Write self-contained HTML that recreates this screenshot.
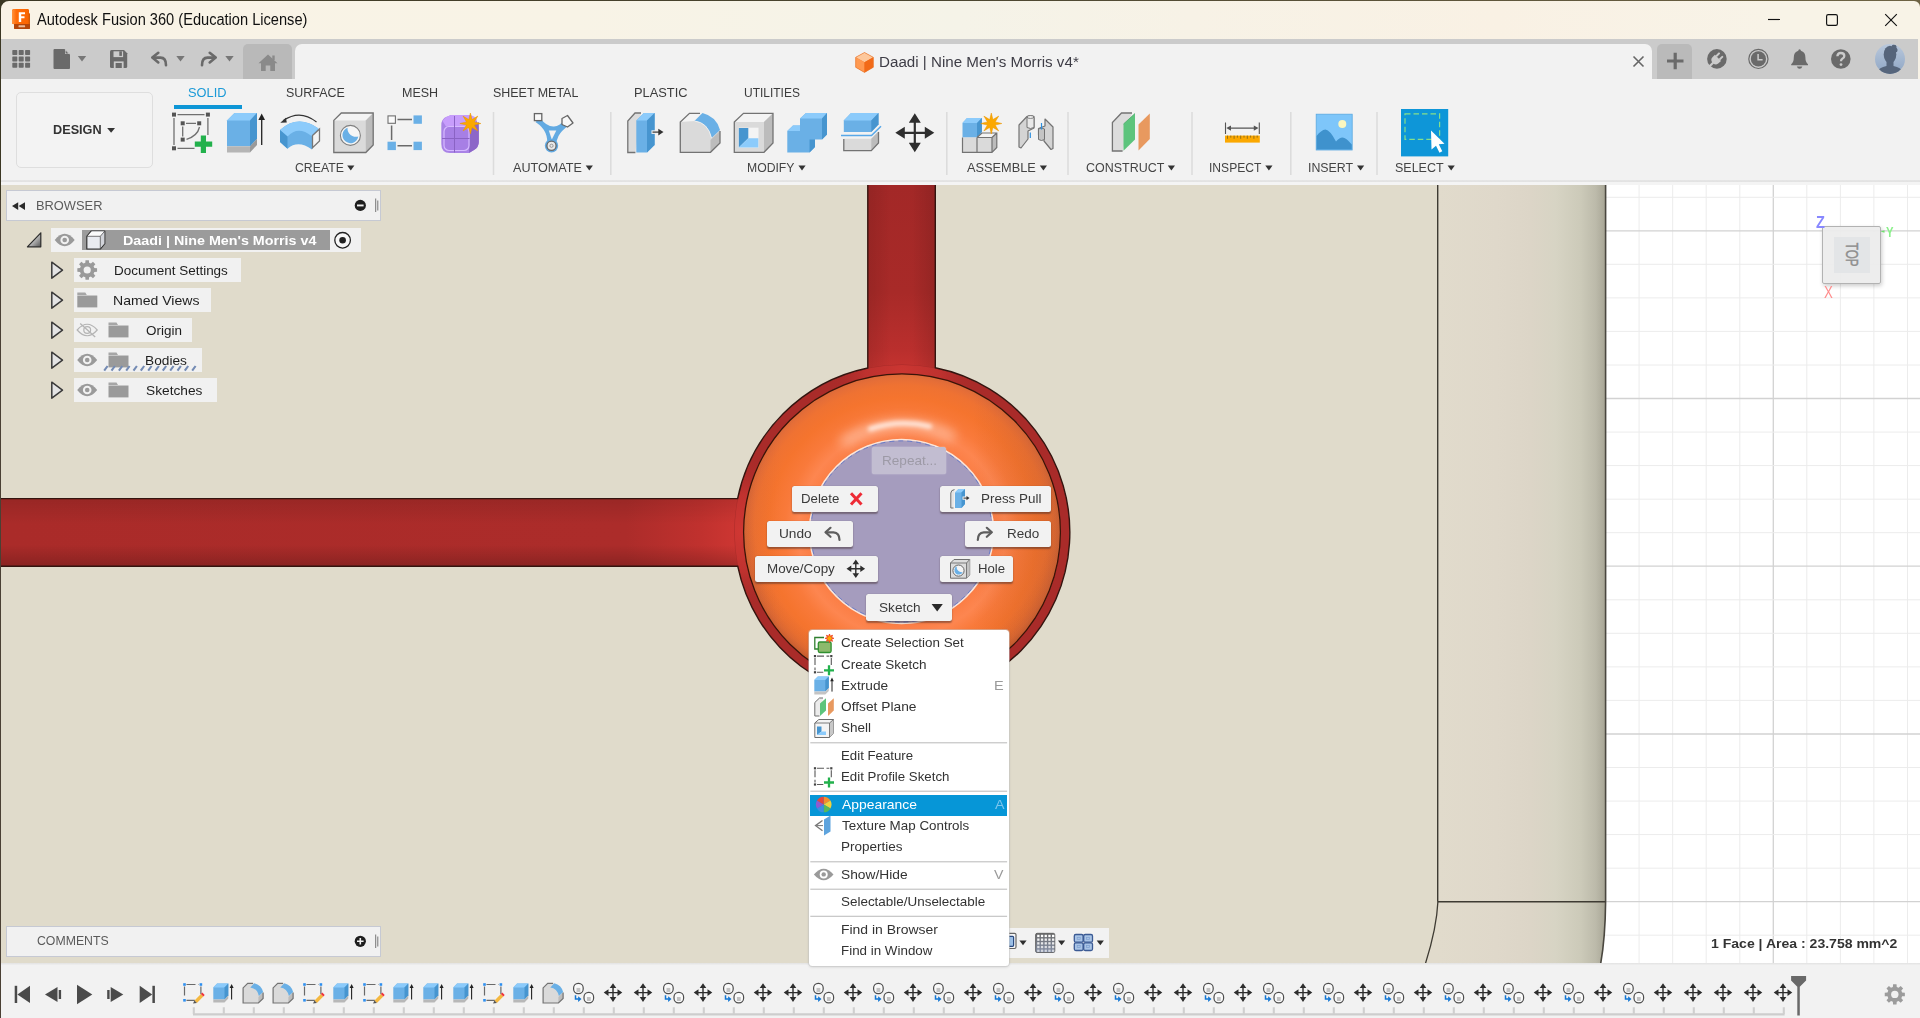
<!DOCTYPE html>
<html><head><meta charset="utf-8"><title>Autodesk Fusion 360</title>
<style>
*{box-sizing:border-box;margin:0;padding:0}
html,body{width:1920px;height:1018px;overflow:hidden}
body{font-family:"Liberation Sans",sans-serif;background:#f8f3e7;position:relative;color:#3c3c3c}
.a{position:absolute}
.tx{position:absolute;white-space:pre;transform-origin:0 0;display:block}
svg{position:absolute;overflow:visible}
#title{position:absolute;left:0;top:0;width:1920px;height:39px;background:linear-gradient(90deg,#f9f3e6 0,#f8f3e6 30%,#f5f3e8 50%,#f7f2e6 62%,#f9f1e4 78%,#f8f3e7 92%,#f8f3e7 100%)}
#qat{position:absolute;left:0;top:39px;width:1918px;height:40px;background:#cbcbcb}
#tabbar{position:absolute;left:295px;top:44px;width:1357px;height:35px;background:#f2f2f2;border-radius:7px 7px 0 0}
#home{position:absolute;left:243px;top:44px;width:49px;height:35px;background:#b9b9b9;border-radius:5px 5px 0 0}
#plus{position:absolute;left:1657px;top:44px;width:35px;height:35px;background:#bababa;border-radius:5px 5px 0 0}
#tool{position:absolute;left:0;top:79px;width:1920px;height:102px;background:#f2f2f2}
#toolsep{position:absolute;left:0;top:180px;width:1920px;height:5px;background:linear-gradient(#e6e6e6 0,#e2e2e2 1.8px,#f4f4f4 2.2px,#f4f4f4 100%)}
#canvas{position:absolute;left:0;top:185px;width:1920px;height:778px;background:#e0dbcb;overflow:hidden}
#tl{position:absolute;left:0;top:963px;width:1920px;height:55px;background:linear-gradient(#e2e2e2 0,#ececec 1.5px,#f2f2f2 2.5px,#f2f2f2 100%)}
</style></head><body>
<div id="title"></div><div id="qat"></div><div id="home"></div><div id="tabbar"></div><div id="plus"></div><div id="tool"></div><div id="toolsep"></div>
<div id="canvas"><svg style="left:0;top:0" width="1920" height="779" viewBox="0 185 1920 779"><defs>
<linearGradient id="gside" x1="1438" x2="1606" y1="0" y2="0" gradientUnits="userSpaceOnUse">
<stop offset="0" stop-color="#e1dbcc"/><stop offset=".35" stop-color="#dfd8ca"/><stop offset=".55" stop-color="#dcd5c7"/><stop offset=".7" stop-color="#d7d4c4"/><stop offset=".85" stop-color="#cccab9"/><stop offset=".94" stop-color="#bcbaaa"/><stop offset="1" stop-color="#a6a494"/>
</linearGradient>
<linearGradient id="gv" x1="0" x2="0" y1="185" y2="380" gradientUnits="userSpaceOnUse">
<stop offset="0" stop-color="#a32827"/><stop offset=".55" stop-color="#a82a28"/><stop offset=".85" stop-color="#ba2f2d"/><stop offset="1" stop-color="#ca3531"/>
</linearGradient>
<linearGradient id="gve" x1="867" x2="936" y1="0" y2="0" gradientUnits="userSpaceOnUse">
<stop offset="0" stop-color="#000" stop-opacity=".10"/><stop offset=".35" stop-color="#000" stop-opacity="0"/><stop offset=".65" stop-color="#000" stop-opacity="0"/><stop offset="1" stop-color="#000" stop-opacity=".12"/>
</linearGradient>
<linearGradient id="gh" x1="0" x2="745" y1="0" y2="0" gradientUnits="userSpaceOnUse">
<stop offset="0" stop-color="#aa2b29"/><stop offset=".84" stop-color="#ac2c2a"/><stop offset=".94" stop-color="#c0312e"/><stop offset="1" stop-color="#d03733"/>
</linearGradient>
<linearGradient id="ghe" x1="0" x2="0" y1="498" y2="567" gradientUnits="userSpaceOnUse">
<stop offset="0" stop-color="#000" stop-opacity=".11"/><stop offset=".38" stop-color="#000" stop-opacity="0"/><stop offset=".68" stop-color="#000" stop-opacity="0"/><stop offset="1" stop-color="#000" stop-opacity=".2"/>
</linearGradient>
<radialGradient id="gor" cx="902" cy="532.3" r="158.400" gradientUnits="userSpaceOnUse">
<stop offset="0" stop-color="#fa7c42"/><stop offset=".58" stop-color="#fb7e45"/><stop offset=".655" stop-color="#fd8650"/><stop offset=".74" stop-color="#f97a3b"/><stop offset=".85" stop-color="#f5742e"/><stop offset=".93" stop-color="#ef7232"/><stop offset=".97" stop-color="#e66e37"/><stop offset="1" stop-color="#db6a39"/>
</radialGradient>
<linearGradient id="gosh" x1="744" x2="1061" y1="0" y2="0" gradientUnits="userSpaceOnUse"><stop offset="0" stop-color="#7a3a20" stop-opacity=".06"/><stop offset=".12" stop-color="#7a3a20" stop-opacity="0"/><stop offset=".72" stop-color="#7a3a20" stop-opacity="0"/><stop offset="1" stop-color="#7a3a20" stop-opacity=".16"/></linearGradient>
<radialGradient id="ghl" cx="902" cy="470" r="75" gradientUnits="userSpaceOnUse" gradientTransform="translate(902 470) scale(1 .55) translate(-902 -470)">
<stop offset="0" stop-color="#fff" stop-opacity=".75"/><stop offset="1" stop-color="#fff" stop-opacity="0"/>
</radialGradient>
<clipPath id="cring"><path d="M902 374A158.500 158.500 0 1 1 901.9 374ZM901.500 440A91.500 91.500 0 1 0 901.6 440Z" clip-rule="evenodd"/></clipPath>
</defs><rect x="1592" y="185" width="328" height="779" fill="#fff"/><g fill="none"><path d="M1639.1 185V964" stroke="#ececec" stroke-width="1"/><path d="M1672.7 185V964" stroke="#ececec" stroke-width="1"/><path d="M1706.2 185V964" stroke="#ececec" stroke-width="1"/><path d="M1739.8 185V964" stroke="#ececec" stroke-width="1"/><path d="M1773.3 185V964" stroke="#d2d2d2" stroke-width="1.3"/><path d="M1806.8 185V964" stroke="#ececec" stroke-width="1"/><path d="M1840.4 185V964" stroke="#ececec" stroke-width="1"/><path d="M1873.9 185V964" stroke="#ececec" stroke-width="1"/><path d="M1907.5 185V964" stroke="#ececec" stroke-width="1"/><path d="M1598 197.3H1920" stroke="#ececec" stroke-width="1"/><path d="M1598 230.8H1920" stroke="#d2d2d2" stroke-width="1.3"/><path d="M1598 264.3H1920" stroke="#ececec" stroke-width="1"/><path d="M1598 297.9H1920" stroke="#ececec" stroke-width="1"/><path d="M1598 331.4H1920" stroke="#ececec" stroke-width="1"/><path d="M1598 365.0H1920" stroke="#ececec" stroke-width="1"/><path d="M1598 398.5H1920" stroke="#d2d2d2" stroke-width="1.3"/><path d="M1598 432.1H1920" stroke="#ececec" stroke-width="1"/><path d="M1598 465.6H1920" stroke="#ececec" stroke-width="1"/><path d="M1598 499.2H1920" stroke="#ececec" stroke-width="1"/><path d="M1598 532.7H1920" stroke="#ececec" stroke-width="1"/><path d="M1598 566.2H1920" stroke="#d2d2d2" stroke-width="1.3"/><path d="M1598 599.8H1920" stroke="#ececec" stroke-width="1"/><path d="M1598 633.3H1920" stroke="#ececec" stroke-width="1"/><path d="M1598 666.9H1920" stroke="#ececec" stroke-width="1"/><path d="M1598 700.4H1920" stroke="#ececec" stroke-width="1"/><path d="M1598 734.0H1920" stroke="#d2d2d2" stroke-width="1.3"/><path d="M1598 767.5H1920" stroke="#ececec" stroke-width="1"/><path d="M1598 801.1H1920" stroke="#ececec" stroke-width="1"/><path d="M1598 834.6H1920" stroke="#ececec" stroke-width="1"/><path d="M1598 868.2H1920" stroke="#ececec" stroke-width="1"/><path d="M1598 901.7H1920" stroke="#d2d2d2" stroke-width="1.3"/><path d="M1598 935.2H1920" stroke="#ececec" stroke-width="1"/></g><path d="M1438 185H1605.8V901.7C1605.5 925 1604 945 1600.6 964H1425.5C1431 946 1436.8 925 1438 901.7Z" fill="url(#gside)"/><path d="M1437.7 185V901.7" stroke="#3e3b33" stroke-width="1.4" fill="none"/><path d="M1605.6 185V901.7C1605.4 925 1604 945 1600.6 964" stroke="#4a473f" stroke-width="1.6" fill="none"/><path d="M1437.7 901.7H1605.6" stroke="#3e3b33" stroke-width="1.4" fill="none"/><path d="M1437.9 901.7C1436.8 925 1431 946 1425.3 964" stroke="#3e3b33" stroke-width="1.3" fill="none"/><rect x="867.800" y="184" width="67.500" height="200" fill="url(#gv)"/><rect x="867.800" y="184" width="67.500" height="200" fill="url(#gve)"/><rect x="-1" y="498.6" width="750" height="67.6" fill="url(#gh)"/><rect x="-1" y="498.6" width="750" height="67.6" fill="url(#ghe)"/><circle cx="902" cy="532.3" r="167.8" fill="#a92b29"/><defs><clipPath id="cout"><circle cx="902" cy="532.3" r="167.300"/></clipPath><radialGradient id="gj1" cx="903" cy="372" r="75" gradientUnits="userSpaceOnUse"><stop offset="0" stop-color="#cc3632"/><stop offset=".5" stop-color="#c33330" stop-opacity=".8"/><stop offset="1" stop-color="#a92b29" stop-opacity="0"/></radialGradient><radialGradient id="gj2" cx="742" cy="532" r="75" gradientUnits="userSpaceOnUse"><stop offset="0" stop-color="#d03733"/><stop offset=".5" stop-color="#c63431" stop-opacity=".8"/><stop offset="1" stop-color="#a92b29" stop-opacity="0"/></radialGradient></defs><g clip-path="url(#cout)"><rect x="820" y="360" width="170" height="90" fill="url(#gj1)"/><rect x="730" y="450" width="90" height="170" fill="url(#gj2)"/></g><path d="M935.300 184V367.8A167.8 167.8 0 1 1 737.7 566.2H-2M-2 498.6H737.6A167.8 167.8 0 0 1 867.800 368.0V184" fill="none" stroke="#33140f" stroke-width="1.400"/><circle cx="902" cy="532.3" r="158.400" fill="url(#gor)" stroke="#3a1408" stroke-width="1.3"/><circle cx="902" cy="532.300" r="157.700" fill="url(#gosh)"/><defs><radialGradient id="grim" cx="902" cy="516" r="176" gradientUnits="userSpaceOnUse"><stop offset="0" stop-color="#7a3010" stop-opacity="0"/><stop offset=".84" stop-color="#7a3010" stop-opacity="0"/><stop offset=".93" stop-color="#7a3010" stop-opacity=".1"/><stop offset="1" stop-color="#7a3010" stop-opacity=".34"/></radialGradient></defs><circle cx="902" cy="532.300" r="157.700" fill="url(#grim)"/><filter id="bl" filterUnits="userSpaceOnUse" x="790" y="380" width="230" height="100"><feGaussianBlur stdDeviation="5.500"/></filter><filter id="bl2" filterUnits="userSpaceOnUse" x="790" y="380" width="230" height="100"><feGaussianBlur stdDeviation="2.200"/></filter><path d="M846 441A107 107 0 0 1 950 436" fill="none" stroke="#ffb999" stroke-width="11" stroke-linecap="round" filter="url(#bl)" opacity=".85"/><path d="M870 429A107 107 0 0 1 930 426.500" fill="none" stroke="#fff0e8" stroke-width="4.500" stroke-linecap="round" filter="url(#bl2)" opacity="1"/><circle cx="901.5" cy="531.5" r="92" fill="#a59cbe" stroke="#fbe6da" stroke-width="1.500"/><circle cx="901.5" cy="531.5" r="90.600" fill="none" stroke="#5b74c9" stroke-width="1" stroke-dasharray="5 4" opacity=".8"/></svg></div>
<div id="tl"></div>
<span class="tx" style="left:37.00px;top:11.76px;font-size:16px;line-height:16px;color:#101010;transform:scaleX(0.9129);">Autodesk Fusion 360 (Education License)</span>
<svg style="left:12px;top:9px" width="19" height="20" viewBox="0 0 19 20">
<defs><linearGradient id="fi1" x1="0" x2="1" y1="0" y2="0"><stop offset="0" stop-color="#ff9540"/><stop offset=".25" stop-color="#ff6d0a"/><stop offset="1" stop-color="#f96400"/></linearGradient></defs>
<path d="M2.2 0H15.5Q17 0 17 1.5V4.2L18 5V19Q18 20 17 20H3Q2 20 2 19V15.3L0 14.8V2Q0 0 2.2 0Z" fill="#d95800"/>
<path d="M2.2 0H15.2Q16.8 0 16.8 1.6V15H0V2Q0 0 2.2 0Z" fill="url(#fi1)"/>
<path d="M2 15H18V19Q18 20 17 20H3Q2 20 2 19Z" fill="#b4460a"/>
<path d="M16.8 4L18 5V15H16.8Z" fill="#cf5a0a"/>
<path d="M6.800 3.200H13V5.300H9.200V7.300H12.500V9.300H9.200V13H6.800Z" fill="#fff"/>
<rect x="6.5" y="16.3" width="6.6" height="2" rx=".6" fill="#f0c8a8" opacity=".9"/>
</svg>
<svg style="left:0;top:0" width="1920" height="39" viewBox="0 0 1920 39" fill="none" stroke="#111" stroke-width="1.15">
<path d="M1768 19.5H1780"/>
<rect x="1826.6" y="14.6" width="10.8" height="10.8" rx="1.6"/>
<path d="M1885.2 14.2L1896.8 25.8M1896.8 14.2L1885.2 25.8"/>
</svg>
<svg style="left:0;top:0" width="1920" height="80" viewBox="0 0 1920 80"><g fill="#6a6a6a"><rect x="12.3" y="50.0" width="5" height="5" rx=".7"/><rect x="12.3" y="56.4" width="5" height="5" rx=".7"/><rect x="12.3" y="62.8" width="5" height="5" rx=".7"/><rect x="18.7" y="50.0" width="5" height="5" rx=".7"/><rect x="18.7" y="56.4" width="5" height="5" rx=".7"/><rect x="18.7" y="62.8" width="5" height="5" rx=".7"/><rect x="25.1" y="50.0" width="5" height="5" rx=".7"/><rect x="25.1" y="56.4" width="5" height="5" rx=".7"/><rect x="25.1" y="62.8" width="5" height="5" rx=".7"/><path d="M54.5 49H64.5L70 54.5V68Q70 69 69 69H54.5Q53.5 69 53.5 68V50Q53.5 49 54.5 49Z"/><path d="M65 49.3L69.7 54H65Z" fill="#cbcbcb"/><path d="M65.6 50.6L68.4 53.4H65.6Z" fill="#6a6a6a"/><path d="M77.8 56H86.2L82 61.4Z" fill="#777"/><path d="M111.5 50H124L127.2 53.2V66.5Q127.2 68 125.7 68H111.5Q110 68 110 66.500V51.5Q110 50 111.5 50Z"/><rect x="113.5" y="51.3" width="9.6" height="5.8" fill="#cbcbcb"/><rect x="119.3" y="51.3" width="2.6" height="4.6" fill="#6a6a6a"/><rect x="113.8" y="61.4" width="9.800" height="6.6" fill="#cbcbcb"/><rect x="115.6" y="63" width="6.2" height="5" fill="#6a6a6a"/></g><g fill="none" stroke="#6a6a6a" stroke-width="2.600" stroke-linecap="round" stroke-linejoin="round"><path d="M158.3 52.8L152.3 57.6L158.3 62.400"/><path d="M153 57.6H160.500Q166 57.6 166 65.2"/><path d="M209.700 52.8L215.7 57.6L209.700 62.400"/><path d="M215 57.6H207.500Q202 57.6 202 65.2"/></g><path d="M176.300 56H184.700L180.500 61.4Z" fill="#777"/><path d="M225.300 56H233.700L229.500 61.4Z" fill="#777"/><g fill="#8a8a8a"><path d="M268 54.500L277.500 63.200H275V71H270.300V65.6H265.700V71H261V63.200H258.500Z"/><rect x="272.300" y="55.5" width="2.4" height="4.500"/></g><path d="M1633.500 56.5L1643.500 66.5M1643.500 56.5L1633.500 66.5" stroke="#666" stroke-width="1.6" fill="none"/><path d="M1667 61H1683.500M1675.200 52.8V69.200" stroke="#6a6a6a" stroke-width="3.200" fill="none"/><g transform="translate(1716.900 58.900)"><circle r="9.800" fill="#6a6a6a"/><g transform="rotate(45)" fill="#cbcbcb"><path d="M-4.300 -1.500H4.300V2Q4.300 5.500 0 5.800Q-4.300 5.500 -4.300 2Z"/><rect x="-3.300" y="-6.200" width="1.900" height="5" rx=".6"/><rect x="1.400" y="-6.200" width="1.900" height="5" rx=".6"/><rect x="-1.100" y="5" width="2.200" height="6"/></g></g><g transform="translate(1758.4 58.9)"><circle r="9.6" fill="none" stroke="#6a6a6a" stroke-width="1.200"/><circle r="7.600" fill="#6a6a6a"/><path d="M-.3 -5V.8H4.200" stroke="#cbcbcb" stroke-width="1.500" fill="none"/></g><g transform="translate(1799.6 59)" fill="#6a6a6a"><path d="M0 -9.800Q1.300 -9.800 1.300 -8.300Q5.800 -7 5.800 -1.500Q5.800 3.200 8.400 5.300V6.300H-8.400V5.300Q-5.800 3.200 -5.800 -1.500Q-5.800 -7 -1.300 -8.300Q-1.300 -9.800 0 -9.800Z"/><path d="M-2.800 7.600H2.800Q2 9.800 0 9.800Q-2 9.800 -2.800 7.600Z"/></g><g transform="translate(1840.8 59)"><circle r="9.800" fill="#6a6a6a"/><path d="M-3.400 -2.800Q-3.400 -6 0 -6Q3.500 -6 3.500 -3Q3.500 -1.200 1.500 -.2Q.2 .5 .2 2.300" fill="none" stroke="#cbcbcb" stroke-width="2.300"/><circle cx=".2" cy="5.600" r="1.400" fill="#cbcbcb"/></g><defs><linearGradient id="av" x1="0" x2="0" y1="0" y2="1"><stop offset="0" stop-color="#b9c8dc"/><stop offset="1" stop-color="#8fa6c4"/></linearGradient><clipPath id="avc"><circle cx="1890" cy="59" r="15"/></clipPath></defs>
<circle cx="1890" cy="59" r="15" fill="url(#av)"/>
<g clip-path="url(#avc)" fill="#56657b"><ellipse cx="1890" cy="54.500" rx="6.300" ry="8.800"/><path d="M1886.500 60H1893.500V66Q1901 67.500 1903 72V76H1877V72Q1879 67.500 1886.500 66Z"/><circle cx="1895" cy="50" r="2.500"/><circle cx="1894" cy="47" r="2.500"/></g></svg>
<svg style="left:855px;top:52px" width="19" height="21" viewBox="0 0 19 21">
<path d="M9.500 .5L18.300 5.300V15.300L9.500 20.400L.7 15.300V5.300Z" fill="#f4772a"/>
<path d="M9.500 .5L18.300 5.300L9.500 10.300L.7 5.300Z" fill="#fdc89c"/>
<path d="M.7 5.300L9.500 10.300V20.400L.7 15.300Z" fill="#ff9a52"/>
<path d="M9.500 10.300L18.300 5.300V15.300L9.500 20.400Z" fill="#f26a18"/>
<path d="M9.500 .5L18.300 5.300V15.300L9.500 20.400L.7 15.300V5.300Z" fill="none" stroke="#e8752c" stroke-width=".6"/>
</svg>
<span class="tx" style="left:879.29px;top:54.26px;font-size:15.4px;line-height:15.4px;color:#3e3d46;transform:scaleX(0.9851);">Daadi | Nine Men's Morris v4*</span>
<div class="a" style="left:16px;top:92px;width:137px;height:76px;border:1px solid #dedede;border-radius:5px;background:#f3f3f3"></div>
<span class="tx" style="left:52.97px;top:123.13px;font-size:13.2px;line-height:13.2px;color:#333;font-weight:bold;transform:scaleX(0.9623);">DESIGN</span>
<span class="tx" style="left:188.42px;top:86.13px;font-size:13.2px;line-height:13.2px;color:#1b9ad7;transform:scaleX(0.9711);">SOLID</span>
<span class="tx" style="left:286.04px;top:86.13px;font-size:13.2px;line-height:13.2px;color:#3c3c3c;transform:scaleX(0.9447);">SURFACE</span>
<span class="tx" style="left:401.50px;top:86.13px;font-size:13.2px;line-height:13.2px;color:#3c3c3c;transform:scaleX(0.9480);">MESH</span>
<span class="tx" style="left:493.44px;top:86.13px;font-size:13.2px;line-height:13.2px;color:#3c3c3c;transform:scaleX(0.9442);">SHEET METAL</span>
<span class="tx" style="left:633.97px;top:86.13px;font-size:13.2px;line-height:13.2px;color:#3c3c3c;transform:scaleX(0.9727);">PLASTIC</span>
<span class="tx" style="left:744.10px;top:86.13px;font-size:13.2px;line-height:13.2px;color:#3c3c3c;transform:scaleX(0.9084);">UTILITIES</span>
<div class="a" style="left:174px;top:105px;width:68px;height:3.5px;background:#0e96d6"></div>
<span class="tx" style="left:294.69px;top:161.21px;font-size:13.1px;line-height:13.1px;color:#444;transform:scaleX(0.9360);">CREATE</span>
<span class="tx" style="left:513.20px;top:161.21px;font-size:13.1px;line-height:13.1px;color:#444;transform:scaleX(0.9619);">AUTOMATE</span>
<span class="tx" style="left:747.02px;top:161.21px;font-size:13.1px;line-height:13.1px;color:#444;transform:scaleX(0.9318);">MODIFY</span>
<span class="tx" style="left:967.30px;top:161.21px;font-size:13.1px;line-height:13.1px;color:#444;transform:scaleX(0.9745);">ASSEMBLE</span>
<span class="tx" style="left:1085.58px;top:161.21px;font-size:13.1px;line-height:13.1px;color:#444;transform:scaleX(0.9522);">CONSTRUCT</span>
<span class="tx" style="left:1208.91px;top:161.21px;font-size:13.1px;line-height:13.1px;color:#444;transform:scaleX(0.9233);">INSPECT</span>
<span class="tx" style="left:1307.89px;top:161.21px;font-size:13.1px;line-height:13.1px;color:#444;transform:scaleX(0.9445);">INSERT</span>
<span class="tx" style="left:1395.04px;top:161.21px;font-size:13.1px;line-height:13.1px;color:#444;transform:scaleX(0.9539);">SELECT</span>
<svg style="left:0;top:0" width="1920" height="185" viewBox="0 0 1920 185"><path d="M347.2 165.6H354.4L350.8 170.4Z" fill="#333"/><path d="M585.7 165.6H592.9L589.3 170.4Z" fill="#333"/><path d="M798.4 165.6H805.6L802.0 170.4Z" fill="#333"/><path d="M1039.8 165.6H1047.0L1043.4 170.4Z" fill="#333"/><path d="M1167.8 165.6H1175.0L1171.4 170.4Z" fill="#333"/><path d="M1265.3 165.6H1272.5L1268.9 170.4Z" fill="#333"/><path d="M1357.0 165.6H1364.2L1360.6 170.4Z" fill="#333"/><path d="M1447.6 165.6H1454.8L1451.2 170.4Z" fill="#333"/><path d="M107.200 127.900H115L111.100 132.700Z" fill="#333"/><rect x="492.7" y="112" width="1.6" height="63" fill="#dcdcdc"/><rect x="610.0" y="112" width="1.6" height="63" fill="#dcdcdc"/><rect x="946.0" y="112" width="1.6" height="63" fill="#dcdcdc"/><rect x="1067.2" y="112" width="1.6" height="63" fill="#dcdcdc"/><rect x="1191.2" y="112" width="1.6" height="63" fill="#dcdcdc"/><rect x="1290.0" y="112" width="1.6" height="63" fill="#dcdcdc"/><rect x="1376.2" y="112" width="1.6" height="63" fill="#dcdcdc"/><g stroke="#707070" stroke-width="1.3" fill="none"><path d="M177.500 114.6H204.500M174 118V145M207.900 118V135M177.500 148.300H194.500"/><path d="M186 123.300H196M182.700 126.500V136.500M186.500 139.300Q197.500 136 199.500 127"/></g><rect x="172.0" y="112.6" width="4" height="4" fill="#555"/><rect x="205.9" y="112.6" width="4" height="4" fill="#555"/><rect x="172.0" y="146.3" width="4" height="4" fill="#555"/><rect x="180.7" y="121.3" width="4" height="4" fill="#555"/><rect x="197.2" y="121.3" width="4" height="4" fill="#555"/><rect x="180.7" y="137.6" width="4" height="4" fill="#555"/><path d="M200.800 135.400H206V141.600H212.200V146.800H206V153H200.800V146.800H194.800V141.600H200.800Z" fill="#22b14c"/><path d="M227 120.400L234.500 113H257V138.800L250 146.300H227Z" fill="#6ab0e6"/><path d="M227 120.400L234.500 113H257L250 120.400Z" fill="#8ccbfb"/><path d="M250 120.400L257 113V138.800L250 146.300Z" fill="#4795cf"/><path d="M227 146.300H250V152.500H227Z" fill="#b5b5b5"/><path d="M250 146.300L257 138.800V145L250 152.500Z" fill="#9a9a9a"/><path d="M261.700 145V119" stroke="#222" stroke-width="1.3"/><path d="M261.700 113.500L265 120H258.400Z" fill="#222"/><path d="M280 130Q298 114 318.500 128.500L312 149.500Q298 139.500 287.500 148.800L280 142Z" fill="#6ab0e6"/><path d="M280 130Q298 114 318.500 128.500L311.500 136Q298 125.500 287.500 136.500Z" fill="#8ccbfb"/><path d="M280 130L287.500 136.500V148.800L280 142Z" fill="#4795cf"/><path d="M312.500 135.500L319.500 129V141L312.500 147.800Z" fill="#f4f4f4" stroke="#777" stroke-width="1.3"/><path d="M283.500 120.500Q300 109 316.500 122" fill="none" stroke="#333" stroke-width="1.1"/><path d="M280.300 122.800L285.800 117.800L286.800 122.500Z" fill="#333"/><path d="M333.800 120.400L341.300 113H373.200V145L365.800 152.500H333.800Z" fill="#dadada"/><path d="M333.800 120.400L341.300 113H373.200L365.800 120.400Z" fill="#f4f4f4"/><path d="M365.800 120.400L373.200 113V145L365.800 152.500Z" fill="#bcbcbc"/><path d="M333.800 120.400L341.300 113H373.200V145L365.800 152.500H333.800Z" fill="none" stroke="#737373" stroke-width="1.300"/><circle cx="350.400" cy="135.400" r="10" fill="#f6f6f6" stroke="#808080" stroke-width="1.1"/><path d="M347.500 127.700A8 8 0 1 0 358.300 136.500A8.500 8.500 0 0 1 347.500 127.700Z" fill="#6ab0e6"/><path d="M397.500 119.600H412M391.600 125.500V140M397.500 145.800H412" stroke="#6a6a6a" stroke-width="1.5" fill="none"/><rect x="388" y="115.900" width="7.400" height="7.400" fill="#fafafa" stroke="#707070" stroke-width="1.100"/><rect x="413.5" y="115.4" width="8.400" height="8.400" fill="#6ab0e6"/><rect x="387.5" y="141.7" width="8.400" height="8.400" fill="#6ab0e6"/><rect x="413.5" y="141.7" width="8.400" height="8.400" fill="#6ab0e6"/><path d="M451 115H470Q478.800 118 478.800 132V142Q478.800 147 474 150L469 153H450Q441.300 153 441.300 144V125Q441.300 120 445 117.500Z" fill="#a983e6"/><path d="M451 115H470Q475 116 477 120L470 126.500H446L442.500 121Q444.500 117 451 115Z" fill="#c79dfc"/><path d="M470 128L478.800 122V142Q478.800 147 474 150L469 153Z" fill="#8c66c8"/><rect x="444" y="126.500" width="25" height="24" rx="5" fill="#a77fe5" stroke="#d6baff" stroke-width="1.2"/><path d="M454.500 116V152.500M442 138.500H469.500" stroke="#8a63c4" stroke-width="1"/><path d="M470.4 113.0L472.0 119.6L477.8 116.1L474.3 121.9L480.9 123.5L474.3 125.1L477.8 130.9L472.0 127.4L470.4 134.0L468.8 127.4L463.0 130.9L466.5 125.1L459.9 123.5L466.5 121.9L463.0 116.1L468.8 119.6Z" fill="#fba800" stroke="#e89400" stroke-width=".5"/><path d="M540 118Q547 127 554 126.500Q560 126 563.500 120.500L568.500 125.500Q561 131 558.500 136Q556 141 556 146H547Q548 139 545.500 133Q543 127 535.500 122Z" fill="#62aae2"/><path d="M548.800 130.500H556.300L551.800 139.500Z" fill="#f2f2f2"/><circle cx="551.500" cy="145.800" r="6.700" fill="#62aae2"/><circle cx="551.500" cy="145.800" r="4.600" fill="#e8e8e8" stroke="#666" stroke-width="1.300"/><circle cx="551.500" cy="145.800" r="1.600" fill="none" stroke="#888" stroke-width=".8"/><rect x="534.400" y="113.600" width="7.400" height="7.000" fill="#f8f8f8" stroke="#666" stroke-width="1.300"/><path d="M567.500 115.500L573 123L567.500 127L562 124.500V118.500Z" fill="#f8f8f8" stroke="#666" stroke-width="1.300" stroke-linejoin="round"/><path d="M635.400 152.500H627.800V121L635 113H641" fill="#dcdcdc" stroke="#737373" stroke-width="1.300"/><path d="M636.300 120.400L643.800 113H654.600V145L647 152.500H636.300Z" fill="#6ab0e6"/><path d="M636.300 120.400L643.800 113H654.600L647 120.400Z" fill="#8ccbfb"/><path d="M647 120.400L654.600 113V145L647 152.500Z" fill="#4795cf"/><rect x="651.500" y="130.300" width="6" height="3.600" fill="#f2f2f2"/><path d="M652.500 132.100H659" stroke="#333" stroke-width="1.200"/><path d="M663.500 132.100L658.300 128.800V135.400Z" fill="#333"/><path d="M680.300 122L689.500 113.300H700L720 131V143L710.500 152.300H680.300Z" fill="#dadada"/><path d="M680.300 122L689.500 113.300H702L694.500 121Z" fill="#f4f4f4"/><path d="M710.500 140L720 131V143L710.500 152.300Z" fill="#bcbcbc"/><path d="M700 113.300L689.500 113.300L680.300 122V152.300H710.500L720 143V131" fill="none" stroke="#737373" stroke-width="1.300"/><path d="M694.500 121Q708 122.500 711.500 138L720 130Q716.500 116.500 702.500 113Z" fill="#6ab0e6"/><path d="M694.500 121Q708 122.500 711.500 138" fill="none" stroke="#f0f0f0" stroke-width="1"/><path d="M734.300 122L743.500 113.300H773V143L764 152.300H734.300Z" fill="#dadada"/><path d="M734.300 122L743.500 113.300H773L764 122Z" fill="#f4f4f4"/><path d="M764 122L773 113.300V143L764 152.300Z" fill="#bcbcbc"/><path d="M734.300 122L743.500 113.300H773V143L764 152.300H734.300Z" fill="none" stroke="#737373" stroke-width="1.300"/><rect x="738.500" y="127.700" width="20" height="20" fill="#f4f4f4"/><path d="M738.800 128H748.300V138.300L738.800 147.500Z" fill="#4795cf"/><path d="M748.300 138.300H758.300V147.500H738.800Z" fill="#8ccbfb"/><path d="M787.300 131L793 125.500H800V118.500L806 113H827V134.500L822 139.500H815V147L809.500 152.500H787.300Z" fill="#6ab0e6"/><path d="M787.300 131L793 125.500H800V131ZM800 118.500L806 113H827L822 118.500Z" fill="#8ccbfb"/><path d="M822 118.500L827 113V134.500L822 139.500ZM809.500 139.500H815V147L809.500 152.500Z" fill="#4795cf"/><path d="M843.800 120.600L851 113H878.500V124.500L871.300 131.900H843.800Z" fill="#6ab0e6"/><path d="M843.800 120.600L851 113H878.500L871.300 120.600Z" fill="#8ccbfb"/><path d="M871.300 120.600L878.500 113V124.500L871.300 131.900Z" fill="#4795cf"/><path d="M843.800 138.800H871.300L878.500 131.500V143L871.300 150.600H843.800Z" fill="#dadada"/><path d="M871.300 138.800L878.500 131.500V143L871.300 150.600Z" fill="#bcbcbc"/><path d="M843.800 139V150.600H871.300L878.500 143V132" fill="none" stroke="#737373" stroke-width="1.300"/><path d="M841 135.600H871.500L881 126.300" fill="none" stroke="#58a8e8" stroke-width="1.500"/><g transform="translate(914.8 132.800)" fill="#2e2e2e"><path d="M-12 -1.100H12V1.100H-12Z M-1.100 -12H1.100V12H-1.100Z"/><path d="M0 -19.500L6 -10H-6ZM0 19.500L6 10H-6ZM-19.500 0L-10 -6V6ZM19.500 0L10 -6V6Z"/></g><path d="M962.500 123L967 118H981.900V132L977 137.500H962.500Z" fill="#6ab0e6"/><path d="M962.500 123L967 118H981.900L977 123Z" fill="#8ccbfb"/><path d="M977 123L981.900 118V132L977 137.500Z" fill="#4795cf"/><path d="M962.500 137.500H977L982 133H996.800V147.500L992 152.300H962.500Z" fill="#dadada"/><path d="M977 137.500L982 133H996.800L992 137.500Z" fill="#f4f4f4"/><path d="M992 137.500L996.800 133V147.500L992 152.300Z" fill="#bcbcbc"/><path d="M962.500 137.500V152.300H992L996.800 147.500V133H982L977 137.500M977 137.500V152.300M977 137.500H992V152.300M992 137.500L996.800 133" fill="none" stroke="#737373" stroke-width="1.200"/><path d="M991.3 113.0L992.9 119.6L998.7 116.1L995.2 121.9L1001.8 123.5L995.2 125.1L998.7 130.9L992.9 127.4L991.3 134.0L989.7 127.4L983.9 130.9L987.4 125.1L980.8 123.5L987.4 121.9L983.9 116.1L989.7 119.6Z" fill="#fba800" stroke="#e89400" stroke-width=".5"/><path d="M1019 125L1027 116.500Q1030.500 114.500 1034 116.500V128L1028 131V139L1021 148L1019 147Z" fill="#d4d4d4" stroke="#737373" stroke-width="1.200" stroke-linejoin="round"/><path d="M1027 117.500Q1030.500 115.500 1034 117.500V127.500Q1030.500 129.500 1027 127.500Z" fill="#e8e8e8" stroke="#737373" stroke-width="1"/><ellipse cx="1030.500" cy="117" rx="3.400" ry="1.400" fill="#f6f6f6" stroke="#737373" stroke-width=".9"/><path d="M1045 119L1053 127V148.500L1051 149.500L1044 141V137L1038.500 135V128.500L1045 126Z" fill="#d4d4d4" stroke="#737373" stroke-width="1.200" stroke-linejoin="round"/><path d="M1038.500 129Q1041.500 127 1044.500 129V139.500Q1041.500 141.500 1038.500 139.500Z" fill="#c4c4c4" stroke="#737373" stroke-width="1"/><path d="M1030.300 132.500V138M1041.500 123V129.500" stroke="#2d8fdf" stroke-width="1.200"/><path d="M1122.600 151H1112.400V122.500L1121.500 113H1132" fill="#dcdcdc" stroke="#737373" stroke-width="1.300"/><path d="M1123.500 124L1135 113.500V139.500L1123.500 150.800Z" fill="#5cc47c"/><path d="M1123.500 124L1135 113.500" stroke="#4aa868" stroke-width=".8"/><path d="M1138.500 124.500L1149.800 113.500V139L1138.500 150.500Z" fill="#e8995f"/><rect x="1225" y="135.600" width="34.800" height="7" fill="#fba800"/><path d="M1227.5 135.600V138.8M1230.8 135.600V137.6M1234.1 135.600V138.8M1237.4 135.600V137.6M1240.7 135.600V138.8M1244.0 135.600V137.6M1247.3 135.600V138.8M1250.6 135.600V137.6M1253.9 135.600V138.8M1257.2 135.600V137.6" stroke="#8a6a1a" stroke-width=".9"/><path d="M1225.500 122.600V134M1259.300 122.600V134M1228 128.100H1257" stroke="#555" stroke-width="1.100" fill="none"/><path d="M1226.300 128.100L1231 125.500V130.700ZM1258.500 128.100L1253.800 125.500V130.700Z" fill="#555"/><rect x="1316.200" y="114.200" width="36" height="35.800" fill="#7ec6fa" stroke="#5aa8e0" stroke-width=".8"/><path d="M1316.600 136Q1321 130 1325.500 129.500Q1330 130 1336 141.500Q1339.500 137.500 1342.500 137.500Q1346 137.500 1351.800 144.500V149.600H1316.600Z" fill="#3f92cd"/><circle cx="1342.300" cy="124" r="4" fill="#fbf7c0"/><rect x="1401" y="109" width="47.200" height="47.400" fill="#0e96d8"/><rect x="1405" y="113.800" width="34.600" height="25.600" fill="none" stroke="#86e08a" stroke-width="1.200" stroke-dasharray="5.500 3"/><path d="M1431 130.500L1444.500 143.800L1438.800 144.300L1442.300 151.300L1439.500 152.700L1436 145.800L1431.500 149.500Z" fill="#fff"/></svg>
<div class="a" style="left:6px;top:190px;width:375px;height:31px;background:#f1f1f1;border:1px solid #c6c9d3"></div>
<span class="tx" style="left:36.47px;top:199.04px;font-size:13.3px;line-height:13.3px;color:#5a5a5a;transform:scaleX(0.9667);">BROWSER</span>
<div class="a" style="left:51px;top:228px;width:310px;height:24.300px;background:#f1f1f1"></div>
<div class="a" style="left:82.300px;top:230.200px;width:247.300px;height:19.600px;background:#9b9b9b"></div>
<span class="tx" style="left:122.67px;top:233.87px;font-size:13.5px;line-height:13.5px;color:#fff;font-weight:bold;transform:scaleX(1.0596);">Daadi | Nine Men's Morris v4</span>
<div class="a" style="left:73.600px;top:257.6px;width:167.4px;height:24.400px;background:#f1f1f1"></div>
<span class="tx" style="left:113.52px;top:263.96px;font-size:13.4px;line-height:13.4px;color:#1e1e1e;transform:scaleX(1.0064);">Document Settings</span>
<div class="a" style="left:73.600px;top:287.6px;width:137.4px;height:24.400px;background:#f1f1f1"></div>
<span class="tx" style="left:113.47px;top:293.96px;font-size:13.4px;line-height:13.4px;color:#1e1e1e;transform:scaleX(1.0498);">Named Views</span>
<div class="a" style="left:73.600px;top:317.6px;width:118.4px;height:24.400px;background:#f1f1f1"></div>
<span class="tx" style="left:145.59px;top:323.96px;font-size:13.4px;line-height:13.4px;color:#1e1e1e;transform:scaleX(1.0048);">Origin</span>
<div class="a" style="left:73.600px;top:347.6px;width:128.4px;height:24.400px;background:#f1f1f1"></div>
<span class="tx" style="left:145.10px;top:353.96px;font-size:13.4px;line-height:13.4px;color:#1e1e1e;transform:scaleX(1.0237);">Bodies</span>
<div class="a" style="left:73.600px;top:377.6px;width:143.4px;height:24.400px;background:#f1f1f1"></div>
<span class="tx" style="left:145.58px;top:383.96px;font-size:13.4px;line-height:13.4px;color:#1e1e1e;transform:scaleX(1.0246);">Sketches</span>
<div class="a" style="left:6px;top:926px;width:375px;height:30.500px;background:#f1f1f1;border:1px solid #c6c9d3"></div>
<span class="tx" style="left:36.89px;top:934.63px;font-size:12.6px;line-height:12.6px;color:#5a5a5a;transform:scaleX(0.9756);">COMMENTS</span><svg style="left:0;top:0" width="400" height="964" viewBox="0 0 400 964"><path d="M12 206.100L18.200 202.200V210ZM18.700 206.100L25 202.200V210Z" fill="#2a2a2a"/><circle cx="360.300" cy="205.400" r="5.600" fill="#1e1e1e"/><rect x="357" y="204.500" width="6.600" height="1.900" fill="#f1f1f1"/><path d="M375.700 198.500V212M377.800 200.500V210.500" stroke="#777" stroke-width="1" fill="none"/><defs><linearGradient id="tg" x1="0" x2="1" y1="0" y2="1"><stop offset=".3" stop-color="#e8e8e8"/><stop offset="1" stop-color="#555"/></linearGradient></defs><path d="M40.800 232.800V246.800H27.400Z" fill="url(#tg)" stroke="#2c2c2c" stroke-width="1.200" stroke-linejoin="round"/><path d="M54.7 240.0Q64.7 227.5 74.7 240.0Q64.7 252.5 54.7 240.0Z" fill="#9a9a9a"/><circle cx="64.7" cy="240.0" r="4.300" fill="#f1f1f1"/><circle cx="64.7" cy="240.0" r="2.300" fill="#9a9a9a"/><path d="M86.800 236.300L91.300 231H104.800V243.700L100.300 249H86.800Z" fill="#e9ebf0" stroke="#333" stroke-width="1.200" stroke-linejoin="round"/><path d="M87.400 236.300L91.600 231.600H104.200L100.200 236.300Z" fill="#fbfbfb"/><path d="M100.300 236.600L104.300 232V243.500L100.300 248.300Z" fill="#d2d4da"/><path d="M86.800 236.300H100.300V249M100.300 236.300L104.800 231" fill="none" stroke="#555" stroke-width=".8"/><circle cx="342.600" cy="240.300" r="7.800" fill="#f8f8f8" stroke="#222" stroke-width="1.300"/><circle cx="342.600" cy="240.300" r="3.300" fill="#222"/><path d="M51.8 262.2V278.2L62.5 270.2Z" fill="#e4e4e4" stroke="#3a3a3a" stroke-width="1.500" stroke-linejoin="round"/><path d="M97.06 268.31L97.06 271.69L94.35 271.90L93.60 273.71L95.37 275.77L92.97 278.17L90.91 276.40L89.10 277.15L88.89 279.86L85.51 279.86L85.30 277.15L83.49 276.40L81.43 278.17L79.03 275.77L80.80 273.71L80.05 271.90L77.34 271.69L77.34 268.31L80.05 268.10L80.80 266.29L79.03 264.23L81.43 261.83L83.49 263.60L85.30 262.85L85.51 260.14L88.89 260.14L89.10 262.85L90.91 263.60L92.97 261.83L95.37 264.23L93.60 266.29L94.35 268.10Z" fill="#9a9a9a"/><circle cx="87.2" cy="270.0" r="3.6" fill="#f1f1f1"/><path d="M51.8 292.2V308.2L62.5 300.2Z" fill="#e4e4e4" stroke="#3a3a3a" stroke-width="1.500" stroke-linejoin="round"/><path d="M77.3 295.9H97.3V307.4H77.3Z" fill="#9a9a9a"/><path d="M77.3 292.4H85.3L86.8 295.0H97.3V295.4H77.3Z" fill="#a6a6a6"/><path d="M51.8 322.2V338.2L62.5 330.2Z" fill="#e4e4e4" stroke="#3a3a3a" stroke-width="1.500" stroke-linejoin="round"/><path d="M77.2 330.0Q87.2 318.5 97.2 330.0Q87.2 341.5 77.2 330.0Z" fill="none" stroke="#b4b4b4" stroke-width="1.200"/><circle cx="87.2" cy="330.0" r="3.400" fill="none" stroke="#b4b4b4" stroke-width="1.200"/><path d="M80.2 323.5L95.2 337.0" stroke="#b4b4b4" stroke-width="1.300"/><path d="M108.5 325.9H128.5V337.4H108.5Z" fill="#9a9a9a"/><path d="M108.5 322.4H116.5L118.0 325.0H128.5V325.4H108.5Z" fill="#a6a6a6"/><path d="M51.8 352.2V368.2L62.5 360.2Z" fill="#e4e4e4" stroke="#3a3a3a" stroke-width="1.500" stroke-linejoin="round"/><path d="M77.2 360.0Q87.2 347.5 97.2 360.0Q87.2 372.5 77.2 360.0Z" fill="#9a9a9a"/><circle cx="87.2" cy="360.0" r="4.300" fill="#f1f1f1"/><circle cx="87.2" cy="360.0" r="2.300" fill="#9a9a9a"/><path d="M108.5 355.9H128.5V367.4H108.5Z" fill="#9a9a9a"/><path d="M108.5 352.4H116.5L118.0 355.0H128.5V355.4H108.5Z" fill="#a6a6a6"/><path d="M51.8 382.2V398.2L62.5 390.2Z" fill="#e4e4e4" stroke="#3a3a3a" stroke-width="1.500" stroke-linejoin="round"/><path d="M77.2 390.0Q87.2 377.5 97.2 390.0Q87.2 402.5 77.2 390.0Z" fill="#9a9a9a"/><circle cx="87.2" cy="390.0" r="4.300" fill="#f1f1f1"/><circle cx="87.2" cy="390.0" r="2.300" fill="#9a9a9a"/><path d="M108.5 385.9H128.5V397.4H108.5Z" fill="#9a9a9a"/><path d="M108.5 382.4H116.5L118.0 385.0H128.5V385.4H108.5Z" fill="#a6a6a6"/><path d="M104.2 370.600L107.6 366M111.5 370.600L114.9 366M118.9 370.600L122.3 366M126.2 370.600L129.6 366M133.5 370.600L136.9 366M140.8 370.600L144.2 366M148.2 370.600L151.6 366M155.5 370.600L158.9 366M162.8 370.600L166.2 366M170.2 370.600L173.6 366M177.5 370.600L180.9 366M184.8 370.600L188.2 366M192.2 370.600L195.6 366" stroke="#748bb4" stroke-width="2.100" fill="none"/><circle cx="360.300" cy="941.300" r="5.600" fill="#1e1e1e"/><path d="M357 941.300H363.600M360.300 938V944.600" stroke="#f1f1f1" stroke-width="1.600"/><path d="M375.700 934.500V948M377.800 936.500V946.500" stroke="#777" stroke-width="1" fill="none"/></svg>
<svg style="left:0;top:0" width="1920" height="1018" viewBox="0 0 1920 1018"><g fill="#4a4a4a"><rect x="14.700" y="985.800" width="2.500" height="17.200"/><path d="M30 985.800V1003L17.400 994.400Z"/><path d="M57.500 987V1002L45 994.500Z"/><rect x="58.700" y="990" width="2.400" height="9"/><path d="M77 984.700V1004.200L92.300 994.500Z"/><rect x="107.200" y="990" width="2.400" height="9"/><path d="M110.700 987V1002L123.300 994.500Z"/><path d="M139.700 985.800V1003L152.200 994.400Z"/><rect x="152.400" y="985.800" width="2.500" height="17.200"/></g><path d="M193.0 1014.400H1784.6" stroke="#cdcdcd" stroke-width="2.200"/><path d="M193.8 1007.300V1014M223.8 1007.300V1014M253.8 1007.300V1014M283.8 1007.300V1014M313.8 1007.300V1014M343.8 1007.300V1014M373.8 1007.300V1014M403.8 1007.300V1014M433.8 1007.300V1014M463.8 1007.300V1014M493.8 1007.300V1014M523.8 1007.300V1014M553.8 1007.300V1014M583.8 1007.300V1014M613.8 1007.300V1014M643.8 1007.300V1014M673.8 1007.300V1014M703.8 1007.300V1014M733.8 1007.300V1014M763.8 1007.300V1014M793.8 1007.300V1014M823.8 1007.300V1014M853.8 1007.300V1014M883.8 1007.300V1014M913.8 1007.300V1014M943.8 1007.300V1014M973.8 1007.300V1014M1003.8 1007.300V1014M1033.8 1007.300V1014M1063.8 1007.300V1014M1093.8 1007.300V1014M1123.8 1007.300V1014M1153.8 1007.300V1014M1183.8 1007.300V1014M1213.8 1007.300V1014M1243.8 1007.300V1014M1273.8 1007.300V1014M1303.8 1007.300V1014M1333.8 1007.300V1014M1363.8 1007.300V1014M1393.8 1007.300V1014M1423.8 1007.300V1014M1453.8 1007.300V1014M1483.8 1007.300V1014M1513.8 1007.300V1014M1543.8 1007.300V1014M1573.8 1007.300V1014M1603.8 1007.300V1014M1633.8 1007.300V1014M1663.8 1007.300V1014M1693.8 1007.300V1014M1723.8 1007.300V1014M1753.8 1007.300V1014M1783.8 1007.300V1014" stroke="#cfcfcf" stroke-width="2.100"/><path d="M186.5 984.5H198.9M184.5 986.5V998.3M200.9 986.5V994.3M186.5 1000.3H194.9" stroke="#6a6a6a" stroke-width="1.200" stroke-dasharray="9 3" fill="none"/><rect x="183.2" y="983.2" width="2.600" height="2.600" fill="#2d8ff0"/><rect x="199.6" y="983.2" width="2.600" height="2.600" fill="#2d8ff0"/><rect x="183.2" y="999.0" width="2.600" height="2.600" fill="#2d8ff0"/><path d="M194.5 1000.6L200.9 994.1L203.3 996.5L196.9 1002.9Z" fill="#f5b941"/><path d="M200.9 994.1L202.3 992.6L204.7 995.1L203.3 996.5Z" fill="#f0333a"/><path d="M194.5 1000.6L196.9 1002.9L193.0 1003.6Z" fill="#555"/><path d="M213.3 987.4L217.1 983.4H228.3V995.4L224.5 999.4H213.3Z" fill="#6ab0e6"/><path d="M213.3 987.4L217.1 983.4H228.3L224.5 987.4Z" fill="#8ccbfb"/><path d="M224.5 987.4L228.3 983.4V995.4L224.5 999.4Z" fill="#4795cf"/><path d="M213.3 999.4H224.5L228.3 995.4V998.4L224.5 1002.4H213.3Z" fill="#b8b8b8"/><path d="M231.6 999.4V987.4" stroke="#222" stroke-width="1.100"/><path d="M231.6 983.9L233.6 988.0H229.6Z" fill="#222"/><path d="M243.1 987.9L247.7 983.4H253.1L263.1 992.4V998.4L258.4 1003.0H243.1Z" fill="#dadada"/><path d="M258.4 996.9L263.1 992.4V998.4L258.4 1003.0Z" fill="#bcbcbc"/><path d="M253.1 983.4H247.7L243.1 987.9V1003.0H258.4L263.1 998.4V992.4" fill="none" stroke="#737373" stroke-width="1.200"/><path d="M250.3 987.4Q257.1 988.2 258.9 995.9L263.1 991.9Q261.4 985.0 254.3 983.2Z" fill="#6ab0e6"/><path d="M273.1 987.9L277.7 983.4H283.1L293.1 992.4V998.4L288.4 1003.0H273.1Z" fill="#dadada"/><path d="M288.4 996.9L293.1 992.4V998.4L288.4 1003.0Z" fill="#bcbcbc"/><path d="M283.1 983.4H277.7L273.1 987.9V1003.0H288.4L293.1 998.4V992.4" fill="none" stroke="#737373" stroke-width="1.200"/><path d="M280.3 987.4Q287.1 988.2 288.9 995.9L293.1 991.9Q291.4 985.0 284.3 983.2Z" fill="#6ab0e6"/><path d="M306.5 984.5H318.9M304.5 986.5V998.3M320.9 986.5V994.3M306.5 1000.3H314.9" stroke="#6a6a6a" stroke-width="1.200" stroke-dasharray="9 3" fill="none"/><rect x="303.2" y="983.2" width="2.600" height="2.600" fill="#2d8ff0"/><rect x="319.6" y="983.2" width="2.600" height="2.600" fill="#2d8ff0"/><rect x="303.2" y="999.0" width="2.600" height="2.600" fill="#2d8ff0"/><path d="M314.5 1000.6L320.9 994.1L323.3 996.5L316.9 1002.9Z" fill="#f5b941"/><path d="M320.9 994.1L322.3 992.6L324.7 995.1L323.3 996.5Z" fill="#f0333a"/><path d="M314.5 1000.6L316.9 1002.9L313.0 1003.6Z" fill="#555"/><path d="M333.3 987.4L337.1 983.4H348.3V995.4L344.5 999.4H333.3Z" fill="#6ab0e6"/><path d="M333.3 987.4L337.1 983.4H348.3L344.5 987.4Z" fill="#8ccbfb"/><path d="M344.5 987.4L348.3 983.4V995.4L344.5 999.4Z" fill="#4795cf"/><path d="M333.3 999.4H344.5L348.3 995.4V998.4L344.5 1002.4H333.3Z" fill="#b8b8b8"/><path d="M351.6 999.4V987.4" stroke="#222" stroke-width="1.100"/><path d="M351.6 983.9L353.6 988.0H349.6Z" fill="#222"/><path d="M366.5 984.5H378.9M364.5 986.5V998.3M380.9 986.5V994.3M366.5 1000.3H374.9" stroke="#6a6a6a" stroke-width="1.200" stroke-dasharray="9 3" fill="none"/><rect x="363.2" y="983.2" width="2.600" height="2.600" fill="#2d8ff0"/><rect x="379.6" y="983.2" width="2.600" height="2.600" fill="#2d8ff0"/><rect x="363.2" y="999.0" width="2.600" height="2.600" fill="#2d8ff0"/><path d="M374.5 1000.6L380.9 994.1L383.3 996.5L376.9 1002.9Z" fill="#f5b941"/><path d="M380.9 994.1L382.3 992.6L384.7 995.1L383.3 996.5Z" fill="#f0333a"/><path d="M374.5 1000.6L376.9 1002.9L373.0 1003.6Z" fill="#555"/><path d="M393.3 987.4L397.1 983.4H408.3V995.4L404.5 999.4H393.3Z" fill="#6ab0e6"/><path d="M393.3 987.4L397.1 983.4H408.3L404.5 987.4Z" fill="#8ccbfb"/><path d="M404.5 987.4L408.3 983.4V995.4L404.5 999.4Z" fill="#4795cf"/><path d="M393.3 999.4H404.5L408.3 995.4V998.4L404.5 1002.4H393.3Z" fill="#b8b8b8"/><path d="M411.6 999.4V987.4" stroke="#222" stroke-width="1.100"/><path d="M411.6 983.9L413.6 988.0H409.6Z" fill="#222"/><path d="M423.3 987.4L427.1 983.4H438.3V995.4L434.5 999.4H423.3Z" fill="#6ab0e6"/><path d="M423.3 987.4L427.1 983.4H438.3L434.5 987.4Z" fill="#8ccbfb"/><path d="M434.5 987.4L438.3 983.4V995.4L434.5 999.4Z" fill="#4795cf"/><path d="M423.3 999.4H434.5L438.3 995.4V998.4L434.5 1002.4H423.3Z" fill="#b8b8b8"/><path d="M441.6 999.4V987.4" stroke="#222" stroke-width="1.100"/><path d="M441.6 983.9L443.6 988.0H439.6Z" fill="#222"/><path d="M453.3 987.4L457.1 983.4H468.3V995.4L464.5 999.4H453.3Z" fill="#6ab0e6"/><path d="M453.3 987.4L457.1 983.4H468.3L464.5 987.4Z" fill="#8ccbfb"/><path d="M464.5 987.4L468.3 983.4V995.4L464.5 999.4Z" fill="#4795cf"/><path d="M453.3 999.4H464.5L468.3 995.4V998.4L464.5 1002.4H453.3Z" fill="#b8b8b8"/><path d="M471.6 999.4V987.4" stroke="#222" stroke-width="1.100"/><path d="M471.6 983.9L473.6 988.0H469.6Z" fill="#222"/><path d="M486.5 984.5H498.9M484.5 986.5V998.3M500.9 986.5V994.3M486.5 1000.3H494.9" stroke="#6a6a6a" stroke-width="1.200" stroke-dasharray="9 3" fill="none"/><rect x="483.2" y="983.2" width="2.600" height="2.600" fill="#2d8ff0"/><rect x="499.6" y="983.2" width="2.600" height="2.600" fill="#2d8ff0"/><rect x="483.2" y="999.0" width="2.600" height="2.600" fill="#2d8ff0"/><path d="M494.5 1000.6L500.9 994.1L503.3 996.5L496.9 1002.9Z" fill="#f5b941"/><path d="M500.9 994.1L502.3 992.6L504.7 995.1L503.3 996.5Z" fill="#f0333a"/><path d="M494.5 1000.6L496.9 1002.9L493.0 1003.6Z" fill="#555"/><path d="M513.3 987.4L517.1 983.4H528.3V995.4L524.5 999.4H513.3Z" fill="#6ab0e6"/><path d="M513.3 987.4L517.1 983.4H528.3L524.5 987.4Z" fill="#8ccbfb"/><path d="M524.5 987.4L528.3 983.4V995.4L524.5 999.4Z" fill="#4795cf"/><path d="M513.3 999.4H524.5L528.3 995.4V998.4L524.5 1002.4H513.3Z" fill="#b8b8b8"/><path d="M531.6 999.4V987.4" stroke="#222" stroke-width="1.100"/><path d="M531.6 983.9L533.6 988.0H529.6Z" fill="#222"/><path d="M543.1 987.9L547.7 983.4H553.1L563.1 992.4V998.4L558.4 1003.0H543.1Z" fill="#dadada"/><path d="M558.4 996.9L563.1 992.4V998.4L558.4 1003.0Z" fill="#bcbcbc"/><path d="M553.1 983.4H547.7L543.1 987.9V1003.0H558.4L563.1 998.4V992.4" fill="none" stroke="#737373" stroke-width="1.200"/><path d="M550.3 987.4Q557.1 988.2 558.9 995.9L563.1 991.9Q561.4 985.0 554.3 983.2Z" fill="#6ab0e6"/><rect x="573.6" y="983.3" width="9.600" height="10.400" rx="4.600" fill="#fafafa" stroke="#4e4e4e" stroke-width="1.200"/><rect x="576.5" y="987.9" width="3.800" height="4" fill="#c2c2c2"/><rect x="584.0" y="992.4" width="9.600" height="10.400" rx="4.600" fill="#fafafa" stroke="#4e4e4e" stroke-width="1.200"/><rect x="586.9" y="997.0" width="3.800" height="4" fill="#c2c2c2"/><path d="M575.5 995.3V999.1H578.6" fill="none" stroke="#1477d4" stroke-width="1.500"/><path d="M581.5 999.1L578.1 996.2V1002.0Z" fill="#1477d4"/><g transform="translate(613.0 992.6)" fill="#2e2e2e"><path d="M-5.500 -.7H5.500V.7H-5.500ZM-.7 -5.500H.7V5.500H-.7Z"/><path d="M0 -9.300L3.300 -4.500H-3.300ZM0 9.300L3.300 4.500H-3.300ZM-9.300 0L-4.500 -3.300V3.300ZM9.300 0L4.500 -3.300V3.300Z"/></g><g transform="translate(643.0 992.6)" fill="#2e2e2e"><path d="M-5.500 -.7H5.500V.7H-5.500ZM-.7 -5.500H.7V5.500H-.7Z"/><path d="M0 -9.300L3.300 -4.500H-3.300ZM0 9.300L3.300 4.500H-3.300ZM-9.300 0L-4.500 -3.300V3.300ZM9.300 0L4.500 -3.300V3.300Z"/></g><rect x="663.6" y="983.3" width="9.600" height="10.400" rx="4.600" fill="#fafafa" stroke="#4e4e4e" stroke-width="1.200"/><rect x="666.5" y="987.9" width="3.800" height="4" fill="#c2c2c2"/><rect x="674.0" y="992.4" width="9.600" height="10.400" rx="4.600" fill="#fafafa" stroke="#4e4e4e" stroke-width="1.200"/><rect x="676.9" y="997.0" width="3.800" height="4" fill="#c2c2c2"/><path d="M665.5 995.3V999.1H668.6" fill="none" stroke="#1477d4" stroke-width="1.500"/><path d="M671.5 999.1L668.1 996.2V1002.0Z" fill="#1477d4"/><g transform="translate(703.0 992.6)" fill="#2e2e2e"><path d="M-5.500 -.7H5.500V.7H-5.500ZM-.7 -5.500H.7V5.500H-.7Z"/><path d="M0 -9.300L3.300 -4.500H-3.300ZM0 9.300L3.300 4.500H-3.300ZM-9.300 0L-4.500 -3.300V3.300ZM9.300 0L4.500 -3.300V3.300Z"/></g><rect x="723.6" y="983.3" width="9.600" height="10.400" rx="4.600" fill="#fafafa" stroke="#4e4e4e" stroke-width="1.200"/><rect x="726.5" y="987.9" width="3.800" height="4" fill="#c2c2c2"/><rect x="734.0" y="992.4" width="9.600" height="10.400" rx="4.600" fill="#fafafa" stroke="#4e4e4e" stroke-width="1.200"/><rect x="736.9" y="997.0" width="3.800" height="4" fill="#c2c2c2"/><path d="M725.5 995.3V999.1H728.6" fill="none" stroke="#1477d4" stroke-width="1.500"/><path d="M731.5 999.1L728.1 996.2V1002.0Z" fill="#1477d4"/><g transform="translate(763.0 992.6)" fill="#2e2e2e"><path d="M-5.500 -.7H5.500V.7H-5.500ZM-.7 -5.500H.7V5.500H-.7Z"/><path d="M0 -9.300L3.300 -4.500H-3.300ZM0 9.300L3.300 4.500H-3.300ZM-9.300 0L-4.500 -3.300V3.300ZM9.300 0L4.500 -3.300V3.300Z"/></g><g transform="translate(793.0 992.6)" fill="#2e2e2e"><path d="M-5.500 -.7H5.500V.7H-5.500ZM-.7 -5.500H.7V5.500H-.7Z"/><path d="M0 -9.300L3.300 -4.500H-3.300ZM0 9.300L3.300 4.500H-3.300ZM-9.300 0L-4.500 -3.300V3.300ZM9.300 0L4.500 -3.300V3.300Z"/></g><rect x="813.6" y="983.3" width="9.600" height="10.400" rx="4.600" fill="#fafafa" stroke="#4e4e4e" stroke-width="1.200"/><rect x="816.5" y="987.9" width="3.800" height="4" fill="#c2c2c2"/><rect x="824.0" y="992.4" width="9.600" height="10.400" rx="4.600" fill="#fafafa" stroke="#4e4e4e" stroke-width="1.200"/><rect x="826.9" y="997.0" width="3.800" height="4" fill="#c2c2c2"/><path d="M815.5 995.3V999.1H818.6" fill="none" stroke="#1477d4" stroke-width="1.500"/><path d="M821.5 999.1L818.1 996.2V1002.0Z" fill="#1477d4"/><g transform="translate(853.0 992.6)" fill="#2e2e2e"><path d="M-5.500 -.7H5.500V.7H-5.500ZM-.7 -5.500H.7V5.500H-.7Z"/><path d="M0 -9.300L3.300 -4.500H-3.300ZM0 9.300L3.300 4.500H-3.300ZM-9.300 0L-4.500 -3.300V3.300ZM9.300 0L4.500 -3.300V3.300Z"/></g><rect x="873.6" y="983.3" width="9.600" height="10.400" rx="4.600" fill="#fafafa" stroke="#4e4e4e" stroke-width="1.200"/><rect x="876.5" y="987.9" width="3.800" height="4" fill="#c2c2c2"/><rect x="884.0" y="992.4" width="9.600" height="10.400" rx="4.600" fill="#fafafa" stroke="#4e4e4e" stroke-width="1.200"/><rect x="886.9" y="997.0" width="3.800" height="4" fill="#c2c2c2"/><path d="M875.5 995.3V999.1H878.6" fill="none" stroke="#1477d4" stroke-width="1.500"/><path d="M881.5 999.1L878.1 996.2V1002.0Z" fill="#1477d4"/><g transform="translate(913.0 992.6)" fill="#2e2e2e"><path d="M-5.500 -.7H5.500V.7H-5.500ZM-.7 -5.500H.7V5.500H-.7Z"/><path d="M0 -9.300L3.300 -4.500H-3.300ZM0 9.300L3.300 4.500H-3.300ZM-9.300 0L-4.500 -3.300V3.300ZM9.300 0L4.500 -3.300V3.300Z"/></g><rect x="933.6" y="983.3" width="9.600" height="10.400" rx="4.600" fill="#fafafa" stroke="#4e4e4e" stroke-width="1.200"/><rect x="936.5" y="987.9" width="3.800" height="4" fill="#c2c2c2"/><rect x="944.0" y="992.4" width="9.600" height="10.400" rx="4.600" fill="#fafafa" stroke="#4e4e4e" stroke-width="1.200"/><rect x="946.9" y="997.0" width="3.800" height="4" fill="#c2c2c2"/><path d="M935.5 995.3V999.1H938.6" fill="none" stroke="#1477d4" stroke-width="1.500"/><path d="M941.5 999.1L938.1 996.2V1002.0Z" fill="#1477d4"/><g transform="translate(973.0 992.6)" fill="#2e2e2e"><path d="M-5.500 -.7H5.500V.7H-5.500ZM-.7 -5.500H.7V5.500H-.7Z"/><path d="M0 -9.300L3.300 -4.500H-3.300ZM0 9.300L3.300 4.500H-3.300ZM-9.300 0L-4.500 -3.300V3.300ZM9.300 0L4.500 -3.300V3.300Z"/></g><rect x="993.6" y="983.3" width="9.600" height="10.400" rx="4.600" fill="#fafafa" stroke="#4e4e4e" stroke-width="1.200"/><rect x="996.5" y="987.9" width="3.800" height="4" fill="#c2c2c2"/><rect x="1004.0" y="992.4" width="9.600" height="10.400" rx="4.600" fill="#fafafa" stroke="#4e4e4e" stroke-width="1.200"/><rect x="1006.9" y="997.0" width="3.800" height="4" fill="#c2c2c2"/><path d="M995.5 995.3V999.1H998.6" fill="none" stroke="#1477d4" stroke-width="1.500"/><path d="M1001.5 999.1L998.1 996.2V1002.0Z" fill="#1477d4"/><g transform="translate(1033.0 992.6)" fill="#2e2e2e"><path d="M-5.500 -.7H5.500V.7H-5.500ZM-.7 -5.500H.7V5.500H-.7Z"/><path d="M0 -9.300L3.300 -4.500H-3.300ZM0 9.300L3.300 4.500H-3.300ZM-9.300 0L-4.500 -3.300V3.300ZM9.300 0L4.500 -3.300V3.300Z"/></g><rect x="1053.6" y="983.3" width="9.600" height="10.400" rx="4.600" fill="#fafafa" stroke="#4e4e4e" stroke-width="1.200"/><rect x="1056.5" y="987.9" width="3.800" height="4" fill="#c2c2c2"/><rect x="1064.0" y="992.4" width="9.600" height="10.400" rx="4.600" fill="#fafafa" stroke="#4e4e4e" stroke-width="1.200"/><rect x="1066.9" y="997.0" width="3.800" height="4" fill="#c2c2c2"/><path d="M1055.5 995.3V999.1H1058.6" fill="none" stroke="#1477d4" stroke-width="1.500"/><path d="M1061.5 999.1L1058.1 996.2V1002.0Z" fill="#1477d4"/><g transform="translate(1093.0 992.6)" fill="#2e2e2e"><path d="M-5.500 -.7H5.500V.7H-5.500ZM-.7 -5.500H.7V5.500H-.7Z"/><path d="M0 -9.300L3.300 -4.500H-3.300ZM0 9.300L3.300 4.500H-3.300ZM-9.300 0L-4.500 -3.300V3.300ZM9.300 0L4.500 -3.300V3.300Z"/></g><rect x="1113.6" y="983.3" width="9.600" height="10.400" rx="4.600" fill="#fafafa" stroke="#4e4e4e" stroke-width="1.200"/><rect x="1116.5" y="987.9" width="3.800" height="4" fill="#c2c2c2"/><rect x="1124.0" y="992.4" width="9.600" height="10.400" rx="4.600" fill="#fafafa" stroke="#4e4e4e" stroke-width="1.200"/><rect x="1126.9" y="997.0" width="3.800" height="4" fill="#c2c2c2"/><path d="M1115.5 995.3V999.1H1118.6" fill="none" stroke="#1477d4" stroke-width="1.500"/><path d="M1121.5 999.1L1118.1 996.2V1002.0Z" fill="#1477d4"/><g transform="translate(1153.0 992.6)" fill="#2e2e2e"><path d="M-5.500 -.7H5.500V.7H-5.500ZM-.7 -5.500H.7V5.500H-.7Z"/><path d="M0 -9.300L3.300 -4.500H-3.300ZM0 9.300L3.300 4.500H-3.300ZM-9.300 0L-4.500 -3.300V3.300ZM9.300 0L4.500 -3.300V3.300Z"/></g><g transform="translate(1183.0 992.6)" fill="#2e2e2e"><path d="M-5.500 -.7H5.500V.7H-5.500ZM-.7 -5.500H.7V5.500H-.7Z"/><path d="M0 -9.300L3.300 -4.500H-3.300ZM0 9.300L3.300 4.500H-3.300ZM-9.300 0L-4.500 -3.300V3.300ZM9.300 0L4.500 -3.300V3.300Z"/></g><rect x="1203.6" y="983.3" width="9.600" height="10.400" rx="4.600" fill="#fafafa" stroke="#4e4e4e" stroke-width="1.200"/><rect x="1206.5" y="987.9" width="3.800" height="4" fill="#c2c2c2"/><rect x="1214.0" y="992.4" width="9.600" height="10.400" rx="4.600" fill="#fafafa" stroke="#4e4e4e" stroke-width="1.200"/><rect x="1216.9" y="997.0" width="3.800" height="4" fill="#c2c2c2"/><path d="M1205.5 995.3V999.1H1208.6" fill="none" stroke="#1477d4" stroke-width="1.500"/><path d="M1211.5 999.1L1208.1 996.2V1002.0Z" fill="#1477d4"/><g transform="translate(1243.0 992.6)" fill="#2e2e2e"><path d="M-5.500 -.7H5.500V.7H-5.500ZM-.7 -5.500H.7V5.500H-.7Z"/><path d="M0 -9.300L3.300 -4.500H-3.300ZM0 9.300L3.300 4.500H-3.300ZM-9.300 0L-4.500 -3.300V3.300ZM9.300 0L4.500 -3.300V3.300Z"/></g><rect x="1263.6" y="983.3" width="9.600" height="10.400" rx="4.600" fill="#fafafa" stroke="#4e4e4e" stroke-width="1.200"/><rect x="1266.5" y="987.9" width="3.800" height="4" fill="#c2c2c2"/><rect x="1274.0" y="992.4" width="9.600" height="10.400" rx="4.600" fill="#fafafa" stroke="#4e4e4e" stroke-width="1.200"/><rect x="1276.9" y="997.0" width="3.800" height="4" fill="#c2c2c2"/><path d="M1265.5 995.3V999.1H1268.6" fill="none" stroke="#1477d4" stroke-width="1.500"/><path d="M1271.5 999.1L1268.1 996.2V1002.0Z" fill="#1477d4"/><g transform="translate(1303.0 992.6)" fill="#2e2e2e"><path d="M-5.500 -.7H5.500V.7H-5.500ZM-.7 -5.500H.7V5.500H-.7Z"/><path d="M0 -9.300L3.300 -4.500H-3.300ZM0 9.300L3.300 4.500H-3.300ZM-9.300 0L-4.500 -3.300V3.300ZM9.300 0L4.500 -3.300V3.300Z"/></g><rect x="1323.6" y="983.3" width="9.600" height="10.400" rx="4.600" fill="#fafafa" stroke="#4e4e4e" stroke-width="1.200"/><rect x="1326.5" y="987.9" width="3.800" height="4" fill="#c2c2c2"/><rect x="1334.0" y="992.4" width="9.600" height="10.400" rx="4.600" fill="#fafafa" stroke="#4e4e4e" stroke-width="1.200"/><rect x="1336.9" y="997.0" width="3.800" height="4" fill="#c2c2c2"/><path d="M1325.5 995.3V999.1H1328.6" fill="none" stroke="#1477d4" stroke-width="1.500"/><path d="M1331.5 999.1L1328.1 996.2V1002.0Z" fill="#1477d4"/><g transform="translate(1363.0 992.6)" fill="#2e2e2e"><path d="M-5.500 -.7H5.500V.7H-5.500ZM-.7 -5.500H.7V5.500H-.7Z"/><path d="M0 -9.300L3.300 -4.500H-3.300ZM0 9.300L3.300 4.500H-3.300ZM-9.300 0L-4.500 -3.300V3.300ZM9.300 0L4.500 -3.300V3.300Z"/></g><rect x="1383.6" y="983.3" width="9.600" height="10.400" rx="4.600" fill="#fafafa" stroke="#4e4e4e" stroke-width="1.200"/><rect x="1386.5" y="987.9" width="3.800" height="4" fill="#c2c2c2"/><rect x="1394.0" y="992.4" width="9.600" height="10.400" rx="4.600" fill="#fafafa" stroke="#4e4e4e" stroke-width="1.200"/><rect x="1396.9" y="997.0" width="3.800" height="4" fill="#c2c2c2"/><path d="M1385.5 995.3V999.1H1388.6" fill="none" stroke="#1477d4" stroke-width="1.500"/><path d="M1391.5 999.1L1388.1 996.2V1002.0Z" fill="#1477d4"/><g transform="translate(1423.0 992.6)" fill="#2e2e2e"><path d="M-5.500 -.7H5.500V.7H-5.500ZM-.7 -5.500H.7V5.500H-.7Z"/><path d="M0 -9.300L3.300 -4.500H-3.300ZM0 9.300L3.300 4.500H-3.300ZM-9.300 0L-4.500 -3.300V3.300ZM9.300 0L4.500 -3.300V3.300Z"/></g><rect x="1443.6" y="983.3" width="9.600" height="10.400" rx="4.600" fill="#fafafa" stroke="#4e4e4e" stroke-width="1.200"/><rect x="1446.5" y="987.9" width="3.800" height="4" fill="#c2c2c2"/><rect x="1454.0" y="992.4" width="9.600" height="10.400" rx="4.600" fill="#fafafa" stroke="#4e4e4e" stroke-width="1.200"/><rect x="1456.9" y="997.0" width="3.800" height="4" fill="#c2c2c2"/><path d="M1445.5 995.3V999.1H1448.6" fill="none" stroke="#1477d4" stroke-width="1.500"/><path d="M1451.5 999.1L1448.1 996.2V1002.0Z" fill="#1477d4"/><g transform="translate(1483.0 992.6)" fill="#2e2e2e"><path d="M-5.500 -.7H5.500V.7H-5.500ZM-.7 -5.500H.7V5.500H-.7Z"/><path d="M0 -9.300L3.300 -4.500H-3.300ZM0 9.300L3.300 4.500H-3.300ZM-9.300 0L-4.500 -3.300V3.300ZM9.300 0L4.500 -3.300V3.300Z"/></g><rect x="1503.6" y="983.3" width="9.600" height="10.400" rx="4.600" fill="#fafafa" stroke="#4e4e4e" stroke-width="1.200"/><rect x="1506.5" y="987.9" width="3.800" height="4" fill="#c2c2c2"/><rect x="1514.0" y="992.4" width="9.600" height="10.400" rx="4.600" fill="#fafafa" stroke="#4e4e4e" stroke-width="1.200"/><rect x="1516.9" y="997.0" width="3.800" height="4" fill="#c2c2c2"/><path d="M1505.5 995.3V999.1H1508.6" fill="none" stroke="#1477d4" stroke-width="1.500"/><path d="M1511.5 999.1L1508.1 996.2V1002.0Z" fill="#1477d4"/><g transform="translate(1543.0 992.6)" fill="#2e2e2e"><path d="M-5.500 -.7H5.500V.7H-5.500ZM-.7 -5.500H.7V5.500H-.7Z"/><path d="M0 -9.300L3.300 -4.500H-3.300ZM0 9.300L3.300 4.500H-3.300ZM-9.300 0L-4.500 -3.300V3.300ZM9.300 0L4.500 -3.300V3.300Z"/></g><rect x="1563.6" y="983.3" width="9.600" height="10.400" rx="4.600" fill="#fafafa" stroke="#4e4e4e" stroke-width="1.200"/><rect x="1566.5" y="987.9" width="3.800" height="4" fill="#c2c2c2"/><rect x="1574.0" y="992.4" width="9.600" height="10.400" rx="4.600" fill="#fafafa" stroke="#4e4e4e" stroke-width="1.200"/><rect x="1576.9" y="997.0" width="3.800" height="4" fill="#c2c2c2"/><path d="M1565.5 995.3V999.1H1568.6" fill="none" stroke="#1477d4" stroke-width="1.500"/><path d="M1571.5 999.1L1568.1 996.2V1002.0Z" fill="#1477d4"/><g transform="translate(1603.0 992.6)" fill="#2e2e2e"><path d="M-5.500 -.7H5.500V.7H-5.500ZM-.7 -5.500H.7V5.500H-.7Z"/><path d="M0 -9.300L3.300 -4.500H-3.300ZM0 9.300L3.300 4.500H-3.300ZM-9.300 0L-4.500 -3.300V3.300ZM9.300 0L4.500 -3.300V3.300Z"/></g><rect x="1623.6" y="983.3" width="9.600" height="10.400" rx="4.600" fill="#fafafa" stroke="#4e4e4e" stroke-width="1.200"/><rect x="1626.5" y="987.9" width="3.800" height="4" fill="#c2c2c2"/><rect x="1634.0" y="992.4" width="9.600" height="10.400" rx="4.600" fill="#fafafa" stroke="#4e4e4e" stroke-width="1.200"/><rect x="1636.9" y="997.0" width="3.800" height="4" fill="#c2c2c2"/><path d="M1625.5 995.3V999.1H1628.6" fill="none" stroke="#1477d4" stroke-width="1.500"/><path d="M1631.5 999.1L1628.1 996.2V1002.0Z" fill="#1477d4"/><g transform="translate(1663.0 992.6)" fill="#2e2e2e"><path d="M-5.500 -.7H5.500V.7H-5.500ZM-.7 -5.500H.7V5.500H-.7Z"/><path d="M0 -9.300L3.300 -4.500H-3.300ZM0 9.300L3.300 4.500H-3.300ZM-9.300 0L-4.500 -3.300V3.300ZM9.300 0L4.500 -3.300V3.300Z"/></g><g transform="translate(1693.0 992.6)" fill="#2e2e2e"><path d="M-5.500 -.7H5.500V.7H-5.500ZM-.7 -5.500H.7V5.500H-.7Z"/><path d="M0 -9.300L3.300 -4.500H-3.300ZM0 9.300L3.300 4.500H-3.300ZM-9.300 0L-4.500 -3.300V3.300ZM9.300 0L4.500 -3.300V3.300Z"/></g><g transform="translate(1723.0 992.6)" fill="#2e2e2e"><path d="M-5.500 -.7H5.500V.7H-5.500ZM-.7 -5.500H.7V5.500H-.7Z"/><path d="M0 -9.300L3.300 -4.500H-3.300ZM0 9.300L3.300 4.500H-3.300ZM-9.300 0L-4.500 -3.300V3.300ZM9.300 0L4.500 -3.300V3.300Z"/></g><g transform="translate(1753.0 992.6)" fill="#2e2e2e"><path d="M-5.500 -.7H5.500V.7H-5.500ZM-.7 -5.500H.7V5.500H-.7Z"/><path d="M0 -9.300L3.300 -4.500H-3.300ZM0 9.300L3.300 4.500H-3.300ZM-9.300 0L-4.500 -3.300V3.300ZM9.300 0L4.500 -3.300V3.300Z"/></g><g transform="translate(1783.0 992.6)" fill="#2e2e2e"><path d="M-5.500 -.7H5.500V.7H-5.500ZM-.7 -5.500H.7V5.500H-.7Z"/><path d="M0 -9.300L3.300 -4.500H-3.300ZM0 9.300L3.300 4.500H-3.300ZM-9.300 0L-4.500 -3.300V3.300ZM9.300 0L4.500 -3.300V3.300Z"/></g><path d="M1791.100 976H1806.100V980.500L1799.800 986.800V1015.600H1797.300V986.800L1791.100 980.500Z" fill="#696969"/><path d="M1904.85 992.67L1904.85 996.13L1902.09 996.34L1901.33 998.19L1903.13 1000.29L1900.69 1002.73L1898.59 1000.93L1896.74 1001.69L1896.53 1004.45L1893.07 1004.45L1892.86 1001.69L1891.01 1000.93L1888.91 1002.73L1886.47 1000.29L1888.27 998.19L1887.51 996.34L1884.75 996.13L1884.75 992.67L1887.51 992.46L1888.27 990.61L1886.47 988.51L1888.91 986.07L1891.01 987.87L1892.86 987.11L1893.07 984.35L1896.53 984.35L1896.74 987.11L1898.59 987.87L1900.69 986.07L1903.13 988.51L1901.33 990.61L1902.09 992.46Z" fill="#9c9c9c"/><circle cx="1894.8" cy="994.4" r="3.7" fill="#f1f1f1"/></svg>
<style>.mb{background:#f2f2f2;border-radius:2.500px;box-shadow:0 1.500px 1.500px rgba(60,40,40,.45),0 0 1px rgba(0,0,0,.25)}</style>
<div class="a" style="left:990px;top:928px;width:119px;height:29.800px;background:#f2f2f2"></div>
<svg style="left:0;top:0" width="1920" height="1018" viewBox="0 0 1920 1018"><rect x="1000" y="933.300" width="16" height="15.200" rx="1.500" fill="#f6f6f6" stroke="#666" stroke-width="1.200"/><rect x="1002" y="936.300" width="11.600" height="10" rx="1" fill="#9cc0e8" stroke="#2a4a80" stroke-width="1.200"/><path d="M1019.4 940.400H1026.6L1023.0 945.200Z" fill="#2e2e2e"/><path d="M1058.0 940.400H1065.2L1061.6 945.200Z" fill="#2e2e2e"/><path d="M1096.7 940.400H1103.9L1100.3 945.200Z" fill="#2e2e2e"/><defs><linearGradient id="ngr" x1="0" x2="0" y1="0" y2="1"><stop offset="0" stop-color="#6a6a6a"/><stop offset="1" stop-color="#8590a8"/></linearGradient></defs><rect x="1035.600" y="933.300" width="19.200" height="19.200" rx="1.500" fill="url(#ngr)" stroke="#555" stroke-width=".8"/><rect x="1037.2" y="934.8" width="2.300" height="2.300" fill="#fff" opacity="1.00"/><rect x="1037.2" y="938.5" width="2.300" height="2.300" fill="#fff" opacity="0.91"/><rect x="1037.2" y="942.2" width="2.300" height="2.300" fill="#fff" opacity="0.82"/><rect x="1037.2" y="945.9" width="2.300" height="2.300" fill="#fff" opacity="0.73"/><rect x="1037.2" y="949.6" width="2.300" height="2.300" fill="#fff" opacity="0.64"/><rect x="1040.9" y="934.8" width="2.300" height="2.300" fill="#fff" opacity="1.00"/><rect x="1040.9" y="938.5" width="2.300" height="2.300" fill="#fff" opacity="0.91"/><rect x="1040.9" y="942.2" width="2.300" height="2.300" fill="#fff" opacity="0.82"/><rect x="1040.9" y="945.9" width="2.300" height="2.300" fill="#fff" opacity="0.73"/><rect x="1040.9" y="949.6" width="2.300" height="2.300" fill="#fff" opacity="0.64"/><rect x="1044.6" y="934.8" width="2.300" height="2.300" fill="#fff" opacity="1.00"/><rect x="1044.6" y="938.5" width="2.300" height="2.300" fill="#fff" opacity="0.91"/><rect x="1044.6" y="942.2" width="2.300" height="2.300" fill="#fff" opacity="0.82"/><rect x="1044.6" y="945.9" width="2.300" height="2.300" fill="#fff" opacity="0.73"/><rect x="1044.6" y="949.6" width="2.300" height="2.300" fill="#fff" opacity="0.64"/><rect x="1048.3" y="934.8" width="2.300" height="2.300" fill="#fff" opacity="1.00"/><rect x="1048.3" y="938.5" width="2.300" height="2.300" fill="#fff" opacity="0.91"/><rect x="1048.3" y="942.2" width="2.300" height="2.300" fill="#fff" opacity="0.82"/><rect x="1048.3" y="945.9" width="2.300" height="2.300" fill="#fff" opacity="0.73"/><rect x="1048.3" y="949.6" width="2.300" height="2.300" fill="#fff" opacity="0.64"/><rect x="1052.0" y="934.8" width="2.300" height="2.300" fill="#fff" opacity="1.00"/><rect x="1052.0" y="938.5" width="2.300" height="2.300" fill="#fff" opacity="0.91"/><rect x="1052.0" y="942.2" width="2.300" height="2.300" fill="#fff" opacity="0.82"/><rect x="1052.0" y="945.9" width="2.300" height="2.300" fill="#fff" opacity="0.73"/><rect x="1052.0" y="949.6" width="2.300" height="2.300" fill="#fff" opacity="0.64"/><rect x="1074.3" y="934.5" width="8.800" height="7.700" rx="1.500" fill="#a9c4e6" stroke="#3b5a94" stroke-width="1.300"/><rect x="1077.2" y="937.3" width="3" height="2" fill="none" stroke="#7d9fd0" stroke-width=".7"/><rect x="1083.7" y="934.5" width="8.800" height="7.700" rx="1.500" fill="#a9c4e6" stroke="#3b5a94" stroke-width="1.300"/><rect x="1086.6" y="937.3" width="3" height="2" fill="none" stroke="#7d9fd0" stroke-width=".7"/><rect x="1074.3" y="942.8" width="8.800" height="7.700" rx="1.500" fill="#a9c4e6" stroke="#3b5a94" stroke-width="1.300"/><rect x="1077.2" y="945.6" width="3" height="2" fill="none" stroke="#7d9fd0" stroke-width=".7"/><rect x="1083.7" y="942.8" width="8.800" height="7.700" rx="1.500" fill="#a9c4e6" stroke="#3b5a94" stroke-width="1.300"/><rect x="1086.6" y="945.6" width="3" height="2" fill="none" stroke="#7d9fd0" stroke-width=".7"/></svg>
<span class="tx" style="left:1710.66px;top:937.04px;font-size:13.3px;line-height:13.3px;color:#333;font-weight:bold;transform:scaleX(1.0554);">1 Face | Area : 23.758 mm^2</span>
<div class="a" style="left:1822.400px;top:225.600px;width:58.300px;height:58px;background:rgba(236,236,236,.93);border:1px solid #b2b2b2;border-radius:2px;box-shadow:1px 2px 4px rgba(0,0,0,.2)"></div>
<div class="a" style="left:1833.900px;top:236.900px;width:35.800px;height:35.700px;background:#e3e5e7"></div>
<span class="tx" style="left:1815.76px;top:215.09px;font-size:15.6px;line-height:15.6px;color:#8888ff;transform:scaleX(0.9324);font-weight:bold;">Z</span>
<span class="tx" style="left:1885.72px;top:223.60px;font-size:15px;line-height:15px;color:#8cf08c;transform:scaleX(0.7527);font-weight:bold;">Y</span>
<span class="tx" style="left:1823.67px;top:285.09px;font-size:15.6px;line-height:15.6px;color:#ff8c8c;transform:scaleX(0.8478);">X</span>
<div class="a" style="left:871.800px;top:446.900px;width:73.800px;height:26.800px;background:#c2bdd1;border-radius:2.500px;box-shadow:0 0 1.500px rgba(255,255,255,.6)"></div>
<span class="tx" style="left:881.91px;top:454.30px;font-size:13px;line-height:13px;color:#9d9aa6;transform:scaleX(1.0454);">Repeat...</span>
<div class="a mb" style="left:792.2px;top:485.6px;width:86.1px;height:26.5px;"></div>
<span class="tx" style="left:800.74px;top:492.21px;font-size:13.1px;line-height:13.1px;color:#3a3a3a;transform:scaleX(1.0104);">Delete</span>
<div class="a mb" style="left:939.7px;top:485.6px;width:110.9px;height:26.5px;"></div>
<span class="tx" style="left:980.63px;top:492.21px;font-size:13.1px;line-height:13.1px;color:#3a3a3a;transform:scaleX(1.0254);">Press Pull</span>
<div class="a mb" style="left:766.9px;top:520.9px;width:86.1px;height:26.3px;"></div>
<span class="tx" style="left:778.77px;top:527.21px;font-size:13.1px;line-height:13.1px;color:#3a3a3a;transform:scaleX(1.0435);">Undo</span>
<div class="a mb" style="left:964.7px;top:520.9px;width:85.9px;height:26.3px;"></div>
<span class="tx" style="left:1006.72px;top:527.21px;font-size:13.1px;line-height:13.1px;color:#3a3a3a;transform:scaleX(1.0290);">Redo</span>
<div class="a mb" style="left:754.5px;top:555.8px;width:123.8px;height:26.3px;"></div>
<span class="tx" style="left:766.93px;top:562.21px;font-size:13.1px;line-height:13.1px;color:#3a3a3a;transform:scaleX(1.0239);">Move/Copy</span>
<div class="a mb" style="left:939.7px;top:555.8px;width:73.1px;height:26.3px;"></div>
<span class="tx" style="left:978.35px;top:562.21px;font-size:13.1px;line-height:13.1px;color:#3a3a3a;transform:scaleX(1.0046);">Hole</span>
<div class="a mb" style="left:865.9px;top:594.4px;width:85.8px;height:26.4px;"></div>
<span class="tx" style="left:878.79px;top:601.21px;font-size:13.1px;line-height:13.1px;color:#3a3a3a;transform:scaleX(1.0394);">Sketch</span>
<div class="a" style="left:808.600px;top:630.400px;width:200.800px;height:335.200px;background:#fff;border-radius:3.500px;box-shadow:0 0 0 1px rgba(200,200,200,.5),0 1px 3px rgba(0,0,0,.16)"></div>
<div class="a" style="left:810.300px;top:795.300px;width:196.800px;height:20.800px;background:#0696d7"></div>
<span class="tx" style="left:841.23px;top:636.30px;font-size:13px;line-height:13px;color:#333;transform:scaleX(1.0296);">Create Selection Set</span>
<span class="tx" style="left:841.23px;top:658.30px;font-size:13px;line-height:13px;color:#333;transform:scaleX(1.0376);">Create Sketch</span>
<span class="tx" style="left:840.81px;top:679.30px;font-size:13px;line-height:13px;color:#333;transform:scaleX(1.0519);">Extrude</span>
<span class="tx" style="left:994.34px;top:679.30px;font-size:13px;line-height:13px;color:#9a9a9a;transform:scaleX(1.1150);">E</span>
<span class="tx" style="left:841.28px;top:700.30px;font-size:13px;line-height:13px;color:#333;transform:scaleX(1.0580);">Offset Plane</span>
<span class="tx" style="left:841.29px;top:721.30px;font-size:13px;line-height:13px;color:#333;transform:scaleX(1.0390);">Shell</span>
<span class="tx" style="left:840.84px;top:749.30px;font-size:13px;line-height:13px;color:#333;transform:scaleX(1.0179);">Edit Feature</span>
<span class="tx" style="left:840.84px;top:770.30px;font-size:13px;line-height:13px;color:#333;transform:scaleX(1.0208);">Edit Profile Sketch</span>
<span class="tx" style="left:841.90px;top:798.30px;font-size:13px;line-height:13px;color:#fff;transform:scaleX(1.0679);">Appearance</span>
<span class="tx" style="left:994.50px;top:798.30px;font-size:13px;line-height:13px;color:#7cc6ee;transform:scaleX(1.0989);">A</span>
<span class="tx" style="left:841.63px;top:819.30px;font-size:13px;line-height:13px;color:#333;transform:scaleX(1.0297);">Texture Map Controls</span>
<span class="tx" style="left:840.82px;top:840.30px;font-size:13px;line-height:13px;color:#333;transform:scaleX(1.0401);">Properties</span>
<span class="tx" style="left:841.28px;top:868.30px;font-size:13px;line-height:13px;color:#333;transform:scaleX(1.0586);">Show/Hide</span>
<span class="tx" style="left:994.43px;top:868.30px;font-size:13px;line-height:13px;color:#9a9a9a;transform:scaleX(1.0922);">V</span>
<span class="tx" style="left:841.30px;top:895.30px;font-size:13px;line-height:13px;color:#333;transform:scaleX(1.0338);">Selectable/Unselectable</span>
<span class="tx" style="left:840.78px;top:923.30px;font-size:13px;line-height:13px;color:#333;transform:scaleX(1.0724);">Find in Browser</span>
<span class="tx" style="left:840.83px;top:944.30px;font-size:13px;line-height:13px;color:#333;transform:scaleX(1.0287);">Find in Window</span><svg style="left:0;top:0" width="1920" height="1018" viewBox="0 0 1920 1018"><text transform="translate(1845.700 242.800) rotate(90) scale(.715 1)" font-family="Liberation Sans" font-size="16.400" fill="#8e8e8e" stroke="#8e8e8e" stroke-width=".45">TOP</text><path d="M1880.500 231.500L1884.500 230.300V232.700Z" fill="#6fe06f"/><path d="M851 493.200L861.500 504.500M861.500 493.200L851 504.500" stroke="#ee2b35" stroke-width="3" fill="none"/><path d="M953.500 508H950.800V493Q951 490 954.500 489.600" fill="#e4e4e4" stroke="#6e6e6e" stroke-width="1"/><path d="M955 492.500L958.500 489H965V504L961.500 508H955Z" fill="#6ab0e6"/><path d="M955 492.500L958.500 489H965L961.500 492.500Z" fill="#8ccbfb"/><path d="M961.500 492.500L965 489V504L961.500 508Z" fill="#4795cf"/><rect x="962.500" y="496.500" width="3.500" height="3.200" fill="#f2f2f2"/><path d="M963.500 498.100H967" stroke="#333" stroke-width="1"/><path d="M969.500 498.100L966.500 496V500.200Z" fill="#333"/><g fill="none" stroke="#5e5e5e" stroke-width="2.200" stroke-linecap="round" stroke-linejoin="round"><path d="M830.500 527.800L825.500 532.300L830.500 536.800"/><path d="M826 532.300H833.500Q839.500 532.800 839.500 540"/><path d="M986.800 527.800L991.800 532.300L986.800 536.800"/><path d="M991.300 532.300H983.800Q977.800 532.800 977.800 540"/></g><g transform="translate(855.800 568.800)" fill="#2e2e2e"><path d="M-5.500 -.7H5.500V.7H-5.500ZM-.7 -5.500H.7V5.500H-.7Z"/><path d="M0 -9.300L3.300 -4.500H-3.300ZM0 9.300L3.300 4.500H-3.300ZM-9.300 0L-4.500 -3.300V3.300ZM9.300 0L4.500 -3.300V3.300Z"/></g><path d="M950.500 563L954 559.500H969.700V575L966.500 578.200H950.500Z" fill="#dcdcdc" stroke="#6e6e6e" stroke-width="1"/><path d="M966.500 563L969.700 559.500V575L966.500 578.200Z" fill="#c2c2c2"/><path d="M950.500 563H966.500V578.200M966.500 563L969.700 559.500" fill="none" stroke="#6e6e6e" stroke-width=".9"/><circle cx="958.500" cy="570.600" r="5.600" fill="#f4f4f4" stroke="#666" stroke-width="1"/><path d="M956.700 566.300A4.400 4.400 0 1 0 962.800 572A5 5 0 0 1 956.700 566.300Z" fill="#6ab0e6"/><path d="M931.600 604H942.800L937.200 611.500Z" fill="#2a2a2a"/><rect x="810.300" y="742.1" width="196.800" height="1.300" fill="#c9c9c9"/><rect x="810.300" y="790.6" width="196.800" height="1.300" fill="#c9c9c9"/><rect x="810.300" y="861.1" width="196.800" height="1.300" fill="#c9c9c9"/><rect x="810.300" y="888.6" width="196.800" height="1.300" fill="#c9c9c9"/><rect x="810.300" y="915.7" width="196.800" height="1.300" fill="#c9c9c9"/><path d="M824 637.500H814.800V649H818" fill="none" stroke="#2f7f2f" stroke-width="1.300"/><rect x="818.300" y="642" width="12.800" height="10.500" rx="1.500" fill="#8cba6c" stroke="#2f8f2f" stroke-width="1.300"/><path d="M829.5 634.0L830.3 636.3L832.5 635.3L831.5 637.5L833.8 638.3L831.5 639.1L832.5 641.3L830.3 640.3L829.5 642.6L828.7 640.3L826.5 641.3L827.5 639.1L825.2 638.3L827.5 637.5L826.5 635.3L828.7 636.3Z" fill="#fba800" stroke="#ee3b20" stroke-width=".9"/><path d="M817.0 656.1H829.3M815.0 658.1V670.3M831.3 658.1V665.3M817.0 672.3H823.3" stroke="#5a5a5a" stroke-width="1.100" stroke-dasharray="7 2.500" fill="none"/><rect x="813.9" y="655.0" width="2.200" height="2.200" fill="#444"/><rect x="830.2" y="655.0" width="2.200" height="2.200" fill="#444"/><rect x="813.9" y="671.2" width="2.200" height="2.200" fill="#444"/><path d="M824.0 670.3H834.0M829.0 665.3V675.3" stroke="#22b14c" stroke-width="2.300"/><path d="M817.0 768.3H829.3M815.0 770.3V782.5M831.3 770.3V777.5M817.0 784.5H823.3" stroke="#5a5a5a" stroke-width="1.100" stroke-dasharray="7 2.500" fill="none"/><rect x="813.9" y="767.2" width="2.200" height="2.200" fill="#444"/><rect x="830.2" y="767.2" width="2.200" height="2.200" fill="#444"/><rect x="813.9" y="783.4" width="2.200" height="2.200" fill="#444"/><path d="M824.0 782.5H834.0M829.0 777.5V787.5" stroke="#22b14c" stroke-width="2.300"/><path d="M814.3 680.1L817.8 676.6H828.8V688.1L825.3 691.6H814.3Z" fill="#6ab0e6"/><path d="M814.3 680.1L817.8 676.6H828.8L825.3 680.1Z" fill="#8ccbfb"/><path d="M825.3 680.1L828.8 676.6V688.1L825.3 691.6Z" fill="#4795cf"/><path d="M814.3 691.6H825.3L828.8 688.1V691.1L825.3 694.6H814.3Z" fill="#c4c4c4"/><path d="M832.0 691.6V680.6" stroke="#222" stroke-width="1"/><path d="M832.0 677.6L833.8 681.2H830.2Z" fill="#222"/><path d="M819.500 716.0H814.800V702.5L819.500 698.0H823" fill="#ececec" stroke="#6e6e6e" stroke-width="1"/><path d="M820 703.5L826 698.3V710.5L820 716.0Z" fill="#5cc47c"/><path d="M828 703.5L833.800 698.3V710.5L828 716.0Z" fill="#e8995f"/><path d="M814.800 723.0L818.800 719.5H833.500V733.5L829.500 737.5H814.800Z" fill="#f4f4f4" stroke="#6e6e6e" stroke-width="1"/><path d="M829.500 723.0L833.500 719.5V733.5L829.500 737.5Z" fill="#c8c8c8"/><path d="M814.800 723.0H829.500V737.5M829.500 723.0L833.500 719.5" fill="none" stroke="#6e6e6e" stroke-width=".9"/><path d="M817 726.5H821.500V731.5L817 735.0Z" fill="#4795cf"/><path d="M821.500 731.5H826V735.0H817Z" fill="#8ccbfb"/><path d="M823.700 804.500L823.70 796.70A7.800 7.800 0 0 1 830.45 800.60Z" fill="#f58c2c"/><path d="M823.700 804.500L830.45 800.60A7.800 7.800 0 0 1 830.45 808.40Z" fill="#f2d23c"/><path d="M823.700 804.500L830.45 808.40A7.800 7.800 0 0 1 823.70 812.30Z" fill="#57b85a"/><path d="M823.700 804.500L823.70 812.30A7.800 7.800 0 0 1 816.95 808.40Z" fill="#3c8fe0"/><path d="M823.700 804.500L816.95 808.40A7.800 7.800 0 0 1 816.95 800.60Z" fill="#8e5bd0"/><path d="M823.700 804.500L816.95 800.60A7.800 7.800 0 0 1 823.70 796.70Z" fill="#e8453c"/><path d="M824 819.500L830.500 815.500V831.500L824 835.500Z" fill="#5ea4de"/><path d="M822.500 820.500L815.500 825.600L822.500 830.800" fill="none" stroke="#777" stroke-width="1.300"/><path d="M817 825.600H823" stroke="#777" stroke-width="1"/><path d="M813.9 874.4Q823.7 862.9 833.5 874.4Q823.7 885.9 813.9 874.4Z" fill="#9a9a9a"/><circle cx="823.7" cy="874.4" r="4" fill="#fff"/><circle cx="823.7" cy="874.4" r="2.200" fill="#9a9a9a"/></svg>
<svg class="a" style="left:0;top:0" width="1920" height="1018" viewBox="0 0 1920 1018">
<defs><linearGradient id="wfr" x1="0" x2="1920" y1="0" y2="0" gradientUnits="userSpaceOnUse"><stop offset="0" stop-color="#3b3723"/><stop offset=".5" stop-color="#4c4630"/><stop offset="1" stop-color="#6e6344"/></linearGradient></defs>
<path d="M0 0H1920V7A6 6 0 0 0 1914 1H9A8 8 0 0 0 1 9V1018H0Z" fill="url(#wfr)"/>
<path d="M0 200V1018H1V200Z" fill="#4a4034"/>
</svg>
</body></html>
